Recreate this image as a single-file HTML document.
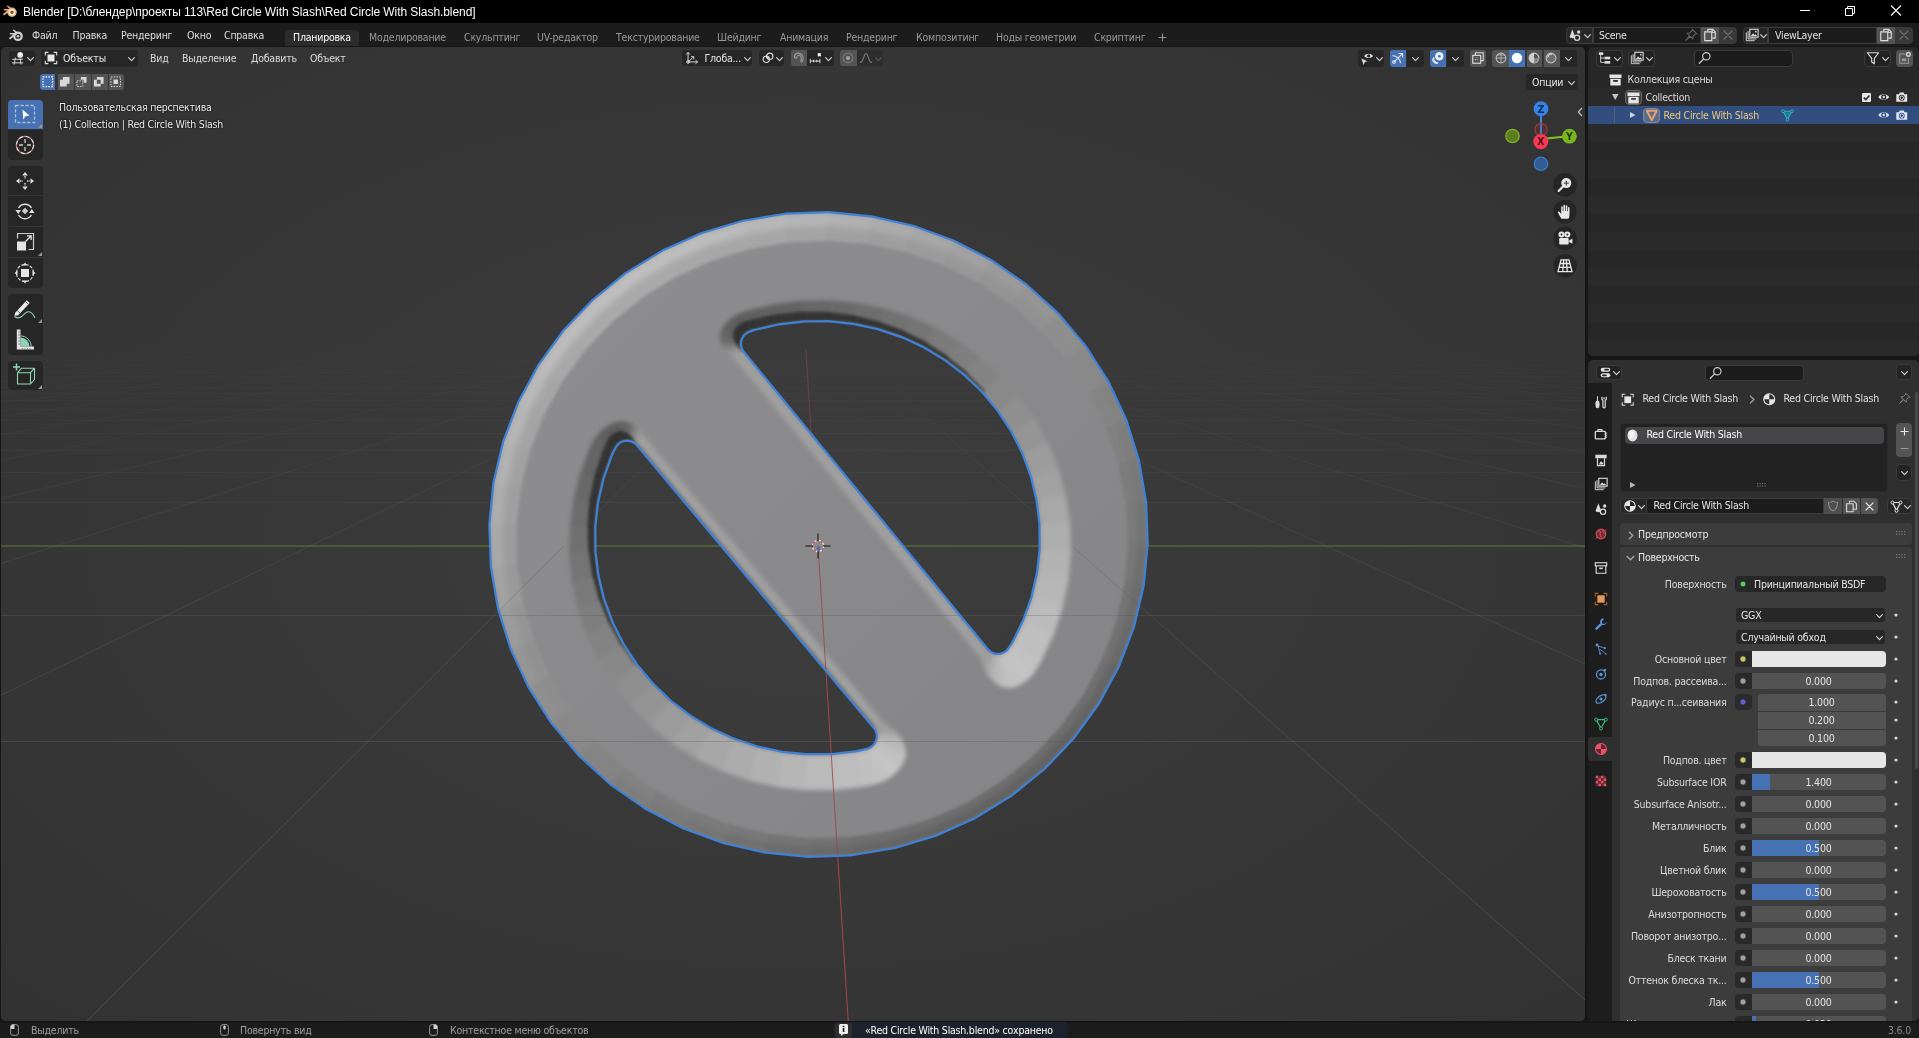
<!DOCTYPE html>
<html lang="ru"><head><meta charset="utf-8"><title>Blender</title>
<style>
*{box-sizing:border-box}
html,body{margin:0;padding:0}
body{width:1919px;height:1038px;position:relative;overflow:hidden;background:#161616;color:#e6e6e6;
 font-family:"DejaVu Sans Condensed","DejaVu Sans","Liberation Sans",sans-serif;font-stretch:condensed;font-size:10.5px;letter-spacing:-0.22px;line-height:13px;-webkit-font-smoothing:antialiased}
.abs{position:absolute}
.t{position:absolute;white-space:nowrap;line-height:13px;height:13px}
svg{position:absolute;overflow:visible}
#title{position:absolute;left:0;top:0;width:1919px;height:23px;background:#000}
#title .tt{position:absolute;left:23px;top:5px;font-family:"Liberation Sans",sans-serif;font-stretch:normal;font-size:12px;letter-spacing:-0.07px;color:#fff;line-height:15px;white-space:nowrap}
#topbar{position:absolute;left:0;top:23px;width:1919px;height:22.5px;background:#1d1d1d}
#vp{position:absolute;left:1px;top:47px;width:1584px;height:974px;border-radius:5px;overflow:hidden;background:#3a3a3a}
#outl{position:absolute;left:1588px;top:47px;width:331px;height:309px;border-radius:5px;overflow:hidden;background:#282828}
#props{position:absolute;left:1588px;top:360px;width:331px;height:661px;border-radius:5px;overflow:hidden;background:#303030}
#status{position:absolute;left:0;top:1022px;width:1919px;height:16px;background:linear-gradient(#161616 0,#161616 1px,#1d1d1d 1px);color:#a8a8a8}

#app{position:absolute;left:0;top:0;width:1919px;height:1038px;overflow:hidden;will-change:transform;opacity:0.9999}

</style></head>
<body>
<div id="app">
<div id="title"><svg style="left:3px;top:5px" width="14.5" height="12.6875" viewBox="0 0 16 14"><g fill="none" stroke="#e8a880" stroke-linecap="round"><path d="M1.2 10.3 L7.2 5.6" stroke-width="2"/><path d="M1.6 5.2 H8.2" stroke-width="1.7"/><path d="M5.2 1.4 L9.2 4.6" stroke-width="1.7"/></g><circle cx="9.9" cy="8" r="5.2" fill="#e9b98a"/><circle cx="9.9" cy="8" r="3.4" fill="#fff2d8"/><circle cx="9.9" cy="8" r="1.9" fill="#8a5a1c"/></svg><div class="tt">Blender [D:\блендер\проекты 113\Red Circle With Slash\Red Circle With Slash.blend]</div><svg style="left:1797px;top:3px" width="110" height="16" viewBox="0 0 110 16"><path d="M3 7.5 H13" stroke="#fff" stroke-width="1"/><path d="M48.5 5.5 h7 v7 h-7 z M50.5 5.5 v-2 h7 v7 h-2" fill="none" stroke="#fff" stroke-width="1"/><path d="M94 2.5 L104 12.5 M104 2.5 L94 12.5" stroke="#fff" stroke-width="1.1"/></svg></div>
<div id="topbar"><svg style="left:8.5px;top:6px" width="14.5" height="12.6875" viewBox="0 0 16 14"><g fill="none" stroke="#d2d2d2" stroke-linecap="round"><path d="M1.2 10.3 L7.2 5.6" stroke-width="2"/><path d="M1.6 5.2 H8.2" stroke-width="1.7"/><path d="M5.2 1.4 L9.2 4.6" stroke-width="1.7"/></g><circle cx="9.9" cy="8" r="4.1" fill="none" stroke="#d2d2d2" stroke-width="2.5"/><circle cx="9.9" cy="8" r="1.5" fill="#d2d2d2"/></svg><div class="t" style="left:32px;top:6px;color:#dedede;">Файл</div><div class="t" style="left:72.5px;top:6px;color:#dedede;">Правка</div><div class="t" style="left:121px;top:6px;color:#dedede;">Рендеринг</div><div class="t" style="left:187px;top:6px;color:#dedede;">Окно</div><div class="t" style="left:224px;top:6px;color:#dedede;">Справка</div><div class="abs" style="left:285px;top:7px;width:73.5px;height:15.5px;background:#2c2c2c;border-radius:4px 4px 0 0"></div><div class="t" style="left:293px;top:8px;color:#ffffff;">Планировка</div><div class="t" style="left:369px;top:8px;color:#999999;">Моделирование</div><div class="t" style="left:464px;top:8px;color:#999999;">Скульптинг</div><div class="t" style="left:537px;top:8px;color:#999999;">UV-редактор</div><div class="t" style="left:616px;top:8px;color:#999999;">Текстурирование</div><div class="t" style="left:717px;top:8px;color:#999999;">Шейдинг</div><div class="t" style="left:780px;top:8px;color:#999999;">Анимация</div><div class="t" style="left:846px;top:8px;color:#999999;">Рендеринг</div><div class="t" style="left:916px;top:8px;color:#999999;">Композитинг</div><div class="t" style="left:996px;top:8px;color:#999999;">Ноды геометрии</div><div class="t" style="left:1094px;top:8px;color:#999999;">Скриптинг</div><svg style="left:1158px;top:10px" width="9" height="9" viewBox="0 0 9 9"><path d="M4.5 0.5 V8.5 M0.5 4.5 H8.5" stroke="#8f8f8f" stroke-width="1.1"/></svg><div class="abs" style="left:1565.5px;top:3.5px;width:27.5px;height:17px;background:#282828;border-radius:4px 0 0 4px;border:1px solid #3d3d3d;"></div><div class="abs" style="left:1592.5px;top:3.5px;width:108px;height:17px;background:#1d1d1d;border-radius:0;border:1px solid #3d3d3d;"></div><div class="abs" style="left:1700.5px;top:3.5px;width:18px;height:17px;background:#545454;border-radius:0;"></div><div class="abs" style="left:1718.5px;top:3.5px;width:18px;height:17px;background:#3a3a3a;border-radius:0 4px 4px 0;"></div><div class="t" style="left:1599px;top:6px;color:#e0e0e0;">Scene</div><div class="abs" style="left:1742.5px;top:3.5px;width:25.5px;height:17px;background:#282828;border-radius:4px 0 0 4px;border:1px solid #3d3d3d;"></div><div class="abs" style="left:1767.5px;top:3.5px;width:109px;height:17px;background:#1d1d1d;border-radius:0;border:1px solid #3d3d3d;"></div><div class="abs" style="left:1876.5px;top:3.5px;width:18px;height:17px;background:#545454;border-radius:0;"></div><div class="abs" style="left:1894.5px;top:3.5px;width:18px;height:17px;background:#3a3a3a;border-radius:0 4px 4px 0;"></div><div class="t" style="left:1775px;top:6px;color:#e0e0e0;">ViewLayer</div><svg style="left:1568px;top:5px" width="14" height="14" viewBox="0 0 16 16" ><path d="M5 1.5 L8.2 10 a3.2 1.6 0 0 1 -6.4 0 Z" fill="#d8d8d8"/><circle cx="10.3" cy="11.2" r="3" fill="none" stroke="#d8d8d8" stroke-width="1.4"/><circle cx="12.2" cy="4.6" r="1.9" fill="#d8d8d8"/></svg><svg style="left:1584px;top:10.5px" width="7" height="4.6" viewBox="0 0 7 4.6"><path d="M0.6 0.6 L3.5 3.6 L6.4 0.6" fill="none" stroke="#d4d4d4" stroke-width="1.15" stroke-linecap="round" stroke-linejoin="round"/></svg><svg style="left:1684px;top:5px" width="14" height="14" viewBox="0 0 16 16" ><path d="M9.5 1.5 L14.5 6.5 L12.8 7 L10.3 9.5 L10 12.5 L7 9.6 L2 14 L6.4 9 L3.5 6 L6.5 5.7 L9 3.2 Z" fill="none" stroke="#666" stroke-width="1.2" stroke-linejoin="round"/></svg><svg style="left:1702.5px;top:5px" width="14" height="14" viewBox="0 0 16 16" ><path d="M5.5 3.5 V1.5 H11 L14 4.5 V11.5 H10.5" fill="none" stroke="#e0e0e0" stroke-width="1.3"/><path d="M2 4.5 H10 V14.5 H2 Z" fill="none" stroke="#e0e0e0" stroke-width="1.3"/><path d="M10.5 1.5 V5 H14" fill="none" stroke="#e0e0e0" stroke-width="1.1"/></svg><svg style="left:1722.5px;top:7px" width="10" height="10" viewBox="0 0 10 10" ><path d="M1 1 L9 9 M9 1 L1 9" stroke="#6a6a6a" stroke-width="1.3" stroke-linecap="round"/></svg><svg style="left:1878.5px;top:5px" width="14" height="14" viewBox="0 0 16 16" ><path d="M5.5 3.5 V1.5 H11 L14 4.5 V11.5 H10.5" fill="none" stroke="#e0e0e0" stroke-width="1.3"/><path d="M2 4.5 H10 V14.5 H2 Z" fill="none" stroke="#e0e0e0" stroke-width="1.3"/><path d="M10.5 1.5 V5 H14" fill="none" stroke="#e0e0e0" stroke-width="1.1"/></svg><svg style="left:1898.5px;top:7px" width="10" height="10" viewBox="0 0 10 10" ><path d="M1 1 L9 9 M9 1 L1 9" stroke="#6a6a6a" stroke-width="1.3" stroke-linecap="round"/></svg><svg style="left:1745px;top:5px" width="14" height="14" viewBox="0 0 16 16" ><path d="M1.5 5 V14.5 H11" fill="none" stroke="#d8d8d8" stroke-width="1.1"/><path d="M3.5 3.5 V12.5 H13" fill="none" stroke="#d8d8d8" stroke-width="1.1"/><rect x="5.5" y="1.5" width="9.5" height="9" fill="none" stroke="#d8d8d8" stroke-width="1.3"/><path d="M6.5 9.5 L9.2 6 L11 8 L12 7 L14 9.5 Z" fill="#d8d8d8"/><circle cx="12.4" cy="4.2" r="1" fill="#d8d8d8"/></svg><svg style="left:1759.5px;top:10.5px" width="7" height="4.6" viewBox="0 0 7 4.6"><path d="M0.6 0.6 L3.5 3.6 L6.4 0.6" fill="none" stroke="#d4d4d4" stroke-width="1.15" stroke-linecap="round" stroke-linejoin="round"/></svg></div>
<div id="vp"><svg id="scene" width="1584" height="974" viewBox="0 0 1584 974" style="left:0;top:0"><defs><radialGradient id="bgv" cx="50%" cy="50%" r="70.7%"><stop offset="0" stop-color="#3e3e3e"/><stop offset="1" stop-color="#333333"/></radialGradient><linearGradient id="gfade" gradientUnits="userSpaceOnUse" x1="0" y1="291" x2="0" y2="974"><stop offset="0.000" stop-color="#fff" stop-opacity="0.0008"/><stop offset="0.384" stop-color="#fff" stop-opacity="0.0720"/><stop offset="1.000" stop-color="#fff" stop-opacity="0.1221"/></linearGradient><mask id="mobj" maskUnits="userSpaceOnUse" x="0" y="0" width="1584" height="974"><path d="M1145.6 497.1 L1141.5 539 L1131.8 579.9 L1116.8 619.3 L1096.7 656.4 L1071.8 690.7 L1042.5 721.4 L1009.4 748.2 L973 770.4 L933.9 787.9 L892.9 800.2 L850.6 807.2 L807.7 808.7 L764.9 804.6 L723.1 795.2 L682.9 780.5 L644.9 760.8 L610 736.4 L578.6 707.8 L551.2 675.4 L528.5 639.7 L510.7 601.5 L498.1 561.3 L491 519.9 L489.4 477.9 L493.5 436 L503.2 395.1 L518.2 355.7 L538.3 318.6 L563.2 284.3 L592.5 253.6 L625.6 226.8 L662 204.6 L701.1 187.1 L742.1 174.8 L784.4 167.8 L827.3 166.3 L870.1 170.4 L911.9 179.8 L952.1 194.5 L990.1 214.2 L1025 238.6 L1056.4 267.2 L1083.8 299.6 L1106.5 335.3 L1124.3 373.5 L1136.9 413.7 L1144 455.1Z" fill="#fff"/><g fill="#000"><path d="M1039.7 500.9 L1039.7 502.5 L1037.2 525.2 L1036.9 526.8 L1031.8 549.1 L1031.4 550.7 L1023.7 572.3 L1023.1 573.8 L1013.1 594.4 L1012.3 595.8 L1008.7 601.5 L1007.7 602.8 L1006.7 603.9 L1005.5 605 L1004.3 605.8 L1002.9 606.6 L1001.5 607.2 L1000 607.6 L998.5 607.9 L996.9 608 L995.4 607.9 L993.8 607.7 L992.3 607.2 L990.9 606.7 L989.5 605.9 L988.2 605 L987.1 604 L986 602.9 L742.1 305.7 L741.1 304.4 L740.4 303.1 L739.7 301.6 L739.3 300.1 L739 298.5 L738.9 297 L739 295.4 L739.2 293.8 L739.7 292.3 L740.3 290.8 L741 289.4 L741.9 288.1 L743 286.9 L744.2 285.9 L745.4 285 L746.8 284.2 L748.3 283.6 L752.7 282.1 L754.2 281.7 L777 276.4 L778.5 276.2 L801.9 273.5 L803.4 273.4 L826.9 273.3 L828.4 273.3 L851.8 275.7 L853.3 276 L876.2 280.9 L877.7 281.3 L899.9 288.8 L901.4 289.3 L922.6 299.1 L923.9 299.8 L943.9 311.9 L945.2 312.8 L963.7 326.9 L964.8 327.9 L981.6 344 L982.6 345.1 L997.4 362.9 L998.3 364.2 L1011 383.5 L1011.7 384.8 L1022.1 405.4 L1022.7 406.8 L1030.6 428.4 L1031.1 429.9 L1036.4 452.2 L1036.7 453.7 L1039.5 476.4 L1039.6 478Z"/><path d="M873.5 680.2 L874.5 681.5 L875.3 682.9 L875.9 684.3 L876.4 685.9 L876.7 687.4 L876.8 689 L876.7 690.6 L876.5 692.2 L876.1 693.7 L875.5 695.2 L874.7 696.6 L873.8 697.9 L872.8 699.1 L871.6 700.1 L870.3 701.1 L868.9 701.8 L867.4 702.4 L865.9 702.9 L856 705.2 L854.5 705.4 L831.1 708.1 L829.6 708.2 L806.1 708.3 L804.6 708.3 L781.2 705.9 L779.7 705.6 L756.8 700.7 L755.3 700.3 L733.1 692.8 L731.6 692.3 L710.4 682.5 L709.1 681.8 L689.1 669.7 L687.8 668.8 L669.3 654.7 L668.2 653.7 L651.4 637.6 L650.4 636.5 L635.6 618.7 L634.7 617.4 L622 598.1 L621.3 596.8 L610.9 576.2 L610.3 574.8 L602.4 553.2 L601.9 551.7 L596.6 529.4 L596.3 527.9 L593.5 505.2 L593.4 503.6 L593.3 480.7 L593.3 479.1 L595.8 456.4 L596.1 454.8 L601.2 432.5 L601.6 430.9 L609.3 409.3 L609.9 407.8 L613.4 400.5 L614.2 399.2 L615.1 397.9 L616.1 396.8 L617.3 395.7 L618.5 394.8 L619.9 394.1 L621.3 393.5 L622.8 393 L624.3 392.8 L625.9 392.7 L627.4 392.7 L628.9 393 L630.4 393.4 L631.9 394 L633.2 394.7 L634.5 395.5 L635.7 396.6 L636.7 397.7Z"/></g></mask><mask id="mblue" maskUnits="userSpaceOnUse" x="0" y="0" width="1584" height="974"><path d="M1145.6 497.1 L1141.5 539 L1131.8 579.9 L1116.8 619.3 L1096.7 656.4 L1071.8 690.7 L1042.5 721.4 L1009.4 748.2 L973 770.4 L933.9 787.9 L892.9 800.2 L850.6 807.2 L807.7 808.7 L764.9 804.6 L723.1 795.2 L682.9 780.5 L644.9 760.8 L610 736.4 L578.6 707.8 L551.2 675.4 L528.5 639.7 L510.7 601.5 L498.1 561.3 L491 519.9 L489.4 477.9 L493.5 436 L503.2 395.1 L518.2 355.7 L538.3 318.6 L563.2 284.3 L592.5 253.6 L625.6 226.8 L662 204.6 L701.1 187.1 L742.1 174.8 L784.4 167.8 L827.3 166.3 L870.1 170.4 L911.9 179.8 L952.1 194.5 L990.1 214.2 L1025 238.6 L1056.4 267.2 L1083.8 299.6 L1106.5 335.3 L1124.3 373.5 L1136.9 413.7 L1144 455.1Z" fill="#fff" stroke="#fff" stroke-width="4.4" stroke-linejoin="round"/><g fill="#000" stroke="#fff" stroke-width="4.4" stroke-linejoin="round"><path d="M1039.7 500.9 L1039.7 502.5 L1037.2 525.2 L1036.9 526.8 L1031.8 549.1 L1031.4 550.7 L1023.7 572.3 L1023.1 573.8 L1013.1 594.4 L1012.3 595.8 L1008.7 601.5 L1007.7 602.8 L1006.7 603.9 L1005.5 605 L1004.3 605.8 L1002.9 606.6 L1001.5 607.2 L1000 607.6 L998.5 607.9 L996.9 608 L995.4 607.9 L993.8 607.7 L992.3 607.2 L990.9 606.7 L989.5 605.9 L988.2 605 L987.1 604 L986 602.9 L742.1 305.7 L741.1 304.4 L740.4 303.1 L739.7 301.6 L739.3 300.1 L739 298.5 L738.9 297 L739 295.4 L739.2 293.8 L739.7 292.3 L740.3 290.8 L741 289.4 L741.9 288.1 L743 286.9 L744.2 285.9 L745.4 285 L746.8 284.2 L748.3 283.6 L752.7 282.1 L754.2 281.7 L777 276.4 L778.5 276.2 L801.9 273.5 L803.4 273.4 L826.9 273.3 L828.4 273.3 L851.8 275.7 L853.3 276 L876.2 280.9 L877.7 281.3 L899.9 288.8 L901.4 289.3 L922.6 299.1 L923.9 299.8 L943.9 311.9 L945.2 312.8 L963.7 326.9 L964.8 327.9 L981.6 344 L982.6 345.1 L997.4 362.9 L998.3 364.2 L1011 383.5 L1011.7 384.8 L1022.1 405.4 L1022.7 406.8 L1030.6 428.4 L1031.1 429.9 L1036.4 452.2 L1036.7 453.7 L1039.5 476.4 L1039.6 478Z"/><path d="M873.5 680.2 L874.5 681.5 L875.3 682.9 L875.9 684.3 L876.4 685.9 L876.7 687.4 L876.8 689 L876.7 690.6 L876.5 692.2 L876.1 693.7 L875.5 695.2 L874.7 696.6 L873.8 697.9 L872.8 699.1 L871.6 700.1 L870.3 701.1 L868.9 701.8 L867.4 702.4 L865.9 702.9 L856 705.2 L854.5 705.4 L831.1 708.1 L829.6 708.2 L806.1 708.3 L804.6 708.3 L781.2 705.9 L779.7 705.6 L756.8 700.7 L755.3 700.3 L733.1 692.8 L731.6 692.3 L710.4 682.5 L709.1 681.8 L689.1 669.7 L687.8 668.8 L669.3 654.7 L668.2 653.7 L651.4 637.6 L650.4 636.5 L635.6 618.7 L634.7 617.4 L622 598.1 L621.3 596.8 L610.9 576.2 L610.3 574.8 L602.4 553.2 L601.9 551.7 L596.6 529.4 L596.3 527.9 L593.5 505.2 L593.4 503.6 L593.3 480.7 L593.3 479.1 L595.8 456.4 L596.1 454.8 L601.2 432.5 L601.6 430.9 L609.3 409.3 L609.9 407.8 L613.4 400.5 L614.2 399.2 L615.1 397.9 L616.1 396.8 L617.3 395.7 L618.5 394.8 L619.9 394.1 L621.3 393.5 L622.8 393 L624.3 392.8 L625.9 392.7 L627.4 392.7 L628.9 393 L630.4 393.4 L631.9 394 L633.2 394.7 L634.5 395.5 L635.7 396.6 L636.7 397.7Z"/></g></mask><linearGradient id="gOuter" x1="0.2" y1="0.05" x2="0.85" y2="0.95"><stop offset="0" stop-color="#adadad"/><stop offset="0.45" stop-color="#9a9a9a"/><stop offset="0.6" stop-color="#858585"/><stop offset="1" stop-color="#6e6e6e"/></linearGradient><linearGradient id="gFace" x1="0" y1="0" x2="1" y2="1"><stop offset="0" stop-color="#909092"/><stop offset="1" stop-color="#858587"/></linearGradient><linearGradient id="gInA" gradientUnits="userSpaceOnUse" x1="699" y1="253" x2="1049" y2="653"><stop offset="0" stop-color="#3c3c3c"/><stop offset="0.42" stop-color="#5a5a5a"/><stop offset="0.6" stop-color="#a0a0a0"/><stop offset="1" stop-color="#b4b4b4"/></linearGradient><linearGradient id="gInB" gradientUnits="userSpaceOnUse" x1="589" y1="383" x2="899" y2="733"><stop offset="0" stop-color="#383838"/><stop offset="0.45" stop-color="#585858"/><stop offset="0.62" stop-color="#a8a8a8"/><stop offset="1" stop-color="#bcbcbc"/></linearGradient><filter id="b3" x="-10%" y="-10%" width="120%" height="120%"><feGaussianBlur stdDeviation="3"/></filter><filter id="b5" x="-10%" y="-10%" width="120%" height="120%"><feGaussianBlur stdDeviation="5"/></filter><filter id="b25" x="-10%" y="-10%" width="120%" height="120%"><feGaussianBlur stdDeviation="2.2"/></filter><filter id="b2" x="-10%" y="-10%" width="120%" height="120%"><feGaussianBlur stdDeviation="1.6"/></filter></defs><rect width="1584" height="974" fill="url(#bgv)"/><path d="M-476.8 291 L-29590.4 974 M-444.8 291 L-28829.4 974 M-412.7 291 L-28068.5 974 M-380.7 291 L-27307.6 974 M-348.7 291 L-26546.6 974 M-316.7 291 L-25785.7 974 M-284.7 291 L-25024.8 974 M-252.7 291 L-24263.8 974 M-220.6 291 L-23502.9 974 M-188.6 291 L-22742 974 M-156.6 291 L-21981 974 M-124.6 291 L-21220.1 974 M-92.6 291 L-20459.2 974 M-60.6 291 L-19698.2 974 M-28.5 291 L-18937.3 974 M3.5 291 L-18176.4 974 M35.5 291 L-17415.4 974 M67.5 291 L-16654.5 974 M99.5 291 L-15893.6 974 M131.5 291 L-15132.7 974 M163.6 291 L-14371.7 974 M195.6 291 L-13610.8 974 M227.6 291 L-12849.9 974 M259.6 291 L-12088.9 974 M291.6 291 L-11328 974 M323.6 291 L-10567.1 974 M355.7 291 L-9806.1 974 M387.7 291 L-9045.2 974 M419.7 291 L-8284.3 974 M451.7 291 L-7523.3 974 M483.7 291 L-6762.4 974 M515.7 291 L-6001.5 974 M547.8 291 L-5240.5 974 M579.8 291 L-4479.6 974 M611.8 291 L-3718.7 974 M643.8 291 L-2957.7 974 M675.8 291 L-2196.8 974 M707.8 291 L-1435.9 974 M739.9 291 L-674.9 974 M771.9 291 L86 974 M835.9 291 L1607.9 974 M867.9 291 L2368.8 974 M899.9 291 L3129.7 974 M932 291 L3890.7 974 M964 291 L4651.6 974 M996 291 L5412.5 974 M1028 291 L6173.5 974 M1060 291 L6934.4 974 M1092 291 L7695.3 974 M1124.1 291 L8456.3 974 M1156.1 291 L9217.2 974 M1188.1 291 L9978.1 974 M1220.1 291 L10739.1 974 M1252.1 291 L11500 974 M1284.1 291 L12260.9 974 M1316.2 291 L13021.9 974 M1348.2 291 L13782.8 974 M1380.2 291 L14543.7 974 M1412.2 291 L15304.7 974 M1444.2 291 L16065.6 974 M1476.2 291 L16826.5 974 M1508.3 291 L17587.5 974 M1540.3 291 L18348.4 974 M1572.3 291 L19109.3 974 M1604.3 291 L19870.3 974 M1636.3 291 L20631.2 974 M1668.3 291 L21392.1 974 M1700.4 291 L22153.1 974 M1732.4 291 L22914 974 M1764.4 291 L23674.9 974 M1796.4 291 L24435.9 974 M1828.4 291 L25196.8 974 M1860.4 291 L25957.7 974 M1892.5 291 L26718.7 974 M1924.5 291 L27479.6 974 M1956.5 291 L28240.5 974 M1988.5 291 L29001.4 974 M2020.5 291 L29762.4 974 M2052.5 291 L30523.3 974 M2084.6 291 L31284.2 974" stroke="url(#gfade)" stroke-width="1" fill="none"/><path d="M0 694.5 H1584" stroke="#fff" stroke-opacity="0.089" stroke-width="1"/><path d="M0 568.5 H1584" stroke="#fff" stroke-opacity="0.074" stroke-width="1"/><path d="M0 455.5 H1584" stroke="#fff" stroke-opacity="0.045" stroke-width="1"/><path d="M0 425.5 H1584" stroke="#fff" stroke-opacity="0.037" stroke-width="1"/><path d="M0 403.5 H1584" stroke="#fff" stroke-opacity="0.031" stroke-width="1"/><path d="M0 386.5 H1584" stroke="#fff" stroke-opacity="0.027" stroke-width="1"/><path d="M0 373.5 H1584" stroke="#fff" stroke-opacity="0.023" stroke-width="1"/><path d="M0 362.5 H1584" stroke="#fff" stroke-opacity="0.020" stroke-width="1"/><path d="M0 353.5 H1584" stroke="#fff" stroke-opacity="0.018" stroke-width="1"/><path d="M0 346.5 H1584" stroke="#fff" stroke-opacity="0.016" stroke-width="1"/><path d="M0 340.5 H1584" stroke="#fff" stroke-opacity="0.014" stroke-width="1"/><path d="M0 334.5 H1584" stroke="#fff" stroke-opacity="0.013" stroke-width="1"/><path d="M0 329.5 H1584" stroke="#fff" stroke-opacity="0.011" stroke-width="1"/><path d="M0 325.5 H1584" stroke="#fff" stroke-opacity="0.010" stroke-width="1"/><path d="M0 322.5 H1584" stroke="#fff" stroke-opacity="0.009" stroke-width="1"/><path d="M0 318.5 H1584" stroke="#fff" stroke-opacity="0.008" stroke-width="1"/><path d="M0 315.5 H1584" stroke="#fff" stroke-opacity="0.007" stroke-width="1"/><path d="M0 313.5 H1584" stroke="#fff" stroke-opacity="0.007" stroke-width="1"/><path d="M0 310.5 H1584" stroke="#fff" stroke-opacity="0.006" stroke-width="1"/><path d="M0 308.5 H1584" stroke="#fff" stroke-opacity="0.005" stroke-width="1"/><path d="M0 306.5 H1584" stroke="#fff" stroke-opacity="0.005" stroke-width="1"/><path d="M0 304.5 H1584" stroke="#fff" stroke-opacity="0.004" stroke-width="1"/><path d="M0 499 H1584" stroke="#6a8c32" stroke-width="1" stroke-opacity="0.85"/><path d="M817 499 L847.2 974" stroke="#b5484f" stroke-width="1" stroke-opacity="0.9"/><path d="M817 499 L805 303" stroke="#b5484f" stroke-width="1" stroke-opacity="0.45"/><g mask="url(#mblue)"><rect x="480" y="150" width="680" height="680" fill="#3f82d8"/></g><g mask="url(#mobj)"><rect x="480" y="150" width="680" height="680" fill="url(#gFace)"/><g stroke-width="0.8" filter="url(#b2)"><path d="M1145.6 497.1 L1141.5 539 L1123.9 536.1 L1127.2 496.6Z" fill="#787878" stroke="#787878"/><path d="M1141.5 539 L1131.8 579.9 L1115.4 574.9 L1123.9 536.1Z" fill="#757575" stroke="#757575"/><path d="M1131.8 579.9 L1116.8 619.3 L1101.6 612.3 L1115.4 574.9Z" fill="#737373" stroke="#737373"/><path d="M1116.8 619.3 L1096.7 656.4 L1082.8 647.7 L1101.6 612.3Z" fill="#717171" stroke="#717171"/><path d="M1096.7 656.4 L1071.8 690.7 L1059.4 680.3 L1082.8 647.7Z" fill="#6f6f6f" stroke="#6f6f6f"/><path d="M1071.8 690.7 L1042.5 721.4 L1031.7 709.7 L1059.4 680.3Z" fill="#6e6e6e" stroke="#6e6e6e"/><path d="M1042.5 721.4 L1009.4 748.2 L1000.2 735.1 L1031.7 709.7Z" fill="#6e6e6e" stroke="#6e6e6e"/><path d="M1009.4 748.2 L973 770.4 L965.6 756.3 L1000.2 735.1Z" fill="#6e6e6e" stroke="#6e6e6e"/><path d="M973 770.4 L933.9 787.9 L928.3 772.8 L965.6 756.3Z" fill="#6f6f6f" stroke="#6f6f6f"/><path d="M933.9 787.9 L892.9 800.2 L889.2 784.3 L928.3 772.8Z" fill="#707070" stroke="#707070"/><path d="M892.9 800.2 L850.6 807.2 L848.9 790.5 L889.2 784.3Z" fill="#717171" stroke="#717171"/><path d="M850.6 807.2 L807.7 808.7 L808.2 791.5 L848.9 790.5Z" fill="#737373" stroke="#737373"/><path d="M807.7 808.7 L764.9 804.6 L767.7 787.2 L808.2 791.5Z" fill="#767676" stroke="#767676"/><path d="M764.9 804.6 L723.1 795.2 L728.2 777.7 L767.7 787.2Z" fill="#797979" stroke="#797979"/><path d="M723.1 795.2 L682.9 780.5 L690.5 763.2 L728.2 777.7Z" fill="#7c7c7c" stroke="#7c7c7c"/><path d="M682.9 780.5 L644.9 760.8 L655.1 744.1 L690.5 763.2Z" fill="#7f7f7f" stroke="#7f7f7f"/><path d="M644.9 760.8 L610 736.4 L622.7 720.5 L655.1 744.1Z" fill="#838383" stroke="#838383"/><path d="M610 736.4 L578.6 707.8 L593.8 693.1 L622.7 720.5Z" fill="#868686" stroke="#868686"/><path d="M578.6 707.8 L551.2 675.4 L568.9 662.4 L593.8 693.1Z" fill="#8a8a8a" stroke="#8a8a8a"/><path d="M551.2 675.4 L528.5 639.7 L548.4 628.8 L568.9 662.4Z" fill="#8e8e8e" stroke="#8e8e8e"/><path d="M528.5 639.7 L510.7 601.5 L532.6 593 L548.4 628.8Z" fill="#929292" stroke="#929292"/><path d="M510.7 601.5 L498.1 561.3 L521.7 555.6 L532.6 593Z" fill="#969696" stroke="#969696"/><path d="M498.1 561.3 L491 519.9 L515.9 517.3 L521.7 555.6Z" fill="#9a9a9a" stroke="#9a9a9a"/><path d="M491 519.9 L489.4 477.9 L515.1 478.6 L515.9 517.3Z" fill="#9d9d9d" stroke="#9d9d9d"/><path d="M489.4 477.9 L493.5 436 L519.5 440.3 L515.1 478.6Z" fill="#a0a0a0" stroke="#a0a0a0"/><path d="M493.5 436 L503.2 395.1 L528.9 403 L519.5 440.3Z" fill="#a3a3a3" stroke="#a3a3a3"/><path d="M503.2 395.1 L518.2 355.7 L543 367.1 L528.9 403Z" fill="#a5a5a5" stroke="#a5a5a5"/><path d="M518.2 355.7 L538.3 318.6 L561.7 333.4 L543 367.1Z" fill="#a7a7a7" stroke="#a7a7a7"/><path d="M538.3 318.6 L563.2 284.3 L584.7 302.2 L561.7 333.4Z" fill="#a9a9a9" stroke="#a9a9a9"/><path d="M563.2 284.3 L592.5 253.6 L611.5 274.3 L584.7 302.2Z" fill="#aaaaaa" stroke="#aaaaaa"/><path d="M592.5 253.6 L625.6 226.8 L641.8 249.9 L611.5 274.3Z" fill="#aaaaaa" stroke="#aaaaaa"/><path d="M625.6 226.8 L662 204.6 L675.1 229.4 L641.8 249.9Z" fill="#aaaaaa" stroke="#aaaaaa"/><path d="M662 204.6 L701.1 187.1 L710.8 213.3 L675.1 229.4Z" fill="#a9a9a9" stroke="#a9a9a9"/><path d="M701.1 187.1 L742.1 174.8 L748.3 201.8 L710.8 213.3Z" fill="#a8a8a8" stroke="#a8a8a8"/><path d="M742.1 174.8 L784.4 167.8 L787.1 195.1 L748.3 201.8Z" fill="#a7a7a7" stroke="#a7a7a7"/><path d="M784.4 167.8 L827.3 166.3 L826.6 193.3 L787.1 195.1Z" fill="#a5a5a5" stroke="#a5a5a5"/><path d="M827.3 166.3 L870.1 170.4 L865.9 196.5 L826.6 193.3Z" fill="#a2a2a2" stroke="#a2a2a2"/><path d="M870.1 170.4 L911.9 179.8 L904.6 204.6 L865.9 196.5Z" fill="#9f9f9f" stroke="#9f9f9f"/><path d="M911.9 179.8 L952.1 194.5 L942 217.6 L904.6 204.6Z" fill="#9c9c9c" stroke="#9c9c9c"/><path d="M952.1 194.5 L990.1 214.2 L977.4 235.2 L942 217.6Z" fill="#999999" stroke="#999999"/><path d="M990.1 214.2 L1025 238.6 L1010.2 257.1 L977.4 235.2Z" fill="#959595" stroke="#959595"/><path d="M1025 238.6 L1056.4 267.2 L1039.9 283.2 L1010.2 257.1Z" fill="#929292" stroke="#929292"/><path d="M1056.4 267.2 L1083.8 299.6 L1065.9 312.8 L1039.9 283.2Z" fill="#8e8e8e" stroke="#8e8e8e"/><path d="M1083.8 299.6 L1106.5 335.3 L1087.8 345.6 L1065.9 312.8Z" fill="#8a8a8a" stroke="#8a8a8a"/><path d="M1106.5 335.3 L1124.3 373.5 L1105.2 380.9 L1087.8 345.6Z" fill="#868686" stroke="#868686"/><path d="M1124.3 373.5 L1136.9 413.7 L1117.7 418.3 L1105.2 380.9Z" fill="#828282" stroke="#828282"/><path d="M1136.9 413.7 L1144 455.1 L1125.1 457.1 L1117.7 418.3Z" fill="#7e7e7e" stroke="#7e7e7e"/><path d="M1144 455.1 L1145.6 497.1 L1127.2 496.6 L1125.1 457.1Z" fill="#7b7b7b" stroke="#7b7b7b"/></g><g stroke-width="0.8" filter="url(#b3)"><path d="M1145.6 497.1 L1141.5 539 L1133.6 537.7 L1137.3 496.9Z" fill="#6e6e6e" stroke="#6e6e6e"/><path d="M1141.5 539 L1131.8 579.9 L1124.4 577.7 L1133.6 537.7Z" fill="#6a6a6a" stroke="#6a6a6a"/><path d="M1131.8 579.9 L1116.8 619.3 L1110 616.2 L1124.4 577.7Z" fill="#676767" stroke="#676767"/><path d="M1116.8 619.3 L1096.7 656.4 L1090.4 652.5 L1110 616.2Z" fill="#646464" stroke="#646464"/><path d="M1096.7 656.4 L1071.8 690.7 L1066.2 686 L1090.4 652.5Z" fill="#626262" stroke="#626262"/><path d="M1071.8 690.7 L1042.5 721.4 L1037.6 716.1 L1066.2 686Z" fill="#616161" stroke="#616161"/><path d="M1042.5 721.4 L1009.4 748.2 L1005.3 742.3 L1037.6 716.1Z" fill="#606060" stroke="#606060"/><path d="M1009.4 748.2 L973 770.4 L969.6 764.1 L1005.3 742.3Z" fill="#606060" stroke="#606060"/><path d="M973 770.4 L933.9 787.9 L931.4 781.1 L969.6 764.1Z" fill="#616161" stroke="#616161"/><path d="M933.9 787.9 L892.9 800.2 L891.2 793 L931.4 781.1Z" fill="#636363" stroke="#636363"/><path d="M892.9 800.2 L850.6 807.2 L849.8 799.7 L891.2 793Z" fill="#656565" stroke="#656565"/><path d="M850.6 807.2 L807.7 808.7 L807.9 800.9 L849.8 799.7Z" fill="#686868" stroke="#686868"/><path d="M807.7 808.7 L764.9 804.6 L766.2 796.8 L807.9 800.9Z" fill="#6b6b6b" stroke="#6b6b6b"/><path d="M764.9 804.6 L723.1 795.2 L725.4 787.3 L766.2 796.8Z" fill="#6f6f6f" stroke="#6f6f6f"/><path d="M723.1 795.2 L682.9 780.5 L686.3 772.7 L725.4 787.3Z" fill="#747474" stroke="#747474"/><path d="M682.9 780.5 L644.9 760.8 L649.5 753.3 L686.3 772.7Z" fill="#797979" stroke="#797979"/><path d="M644.9 760.8 L610 736.4 L615.7 729.3 L649.5 753.3Z" fill="#7e7e7e" stroke="#7e7e7e"/><path d="M610 736.4 L578.6 707.8 L585.4 701.2 L615.7 729.3Z" fill="#848484" stroke="#848484"/><path d="M578.6 707.8 L551.2 675.4 L559.2 669.5 L585.4 701.2Z" fill="#898989" stroke="#898989"/><path d="M551.2 675.4 L528.5 639.7 L537.4 634.8 L559.2 669.5Z" fill="#909090" stroke="#909090"/><path d="M528.5 639.7 L510.7 601.5 L520.5 597.7 L537.4 634.8Z" fill="#979797" stroke="#979797"/><path d="M510.7 601.5 L498.1 561.3 L508.7 558.8 L520.5 597.7Z" fill="#9d9d9d" stroke="#9d9d9d"/><path d="M498.1 561.3 L491 519.9 L502.2 518.7 L508.7 558.8Z" fill="#a4a4a4" stroke="#a4a4a4"/><path d="M491 519.9 L489.4 477.9 L501 478.2 L502.2 518.7Z" fill="#aaaaaa" stroke="#aaaaaa"/><path d="M489.4 477.9 L493.5 436 L505.2 438 L501 478.2Z" fill="#afafaf" stroke="#afafaf"/><path d="M493.5 436 L503.2 395.1 L514.7 398.6 L505.2 438Z" fill="#b4b4b4" stroke="#b4b4b4"/><path d="M503.2 395.1 L518.2 355.7 L529.4 360.8 L514.7 398.6Z" fill="#b8b8b8" stroke="#b8b8b8"/><path d="M518.2 355.7 L538.3 318.6 L548.9 325.2 L529.4 360.8Z" fill="#bbbbbb" stroke="#bbbbbb"/><path d="M538.3 318.6 L563.2 284.3 L572.9 292.4 L548.9 325.2Z" fill="#bebebe" stroke="#bebebe"/><path d="M563.2 284.3 L592.5 253.6 L601.1 262.9 L572.9 292.4Z" fill="#bfbfbf" stroke="#bfbfbf"/><path d="M592.5 253.6 L625.6 226.8 L632.9 237.2 L601.1 262.9Z" fill="#c0c0c0" stroke="#c0c0c0"/><path d="M625.6 226.8 L662 204.6 L667.9 215.7 L632.9 237.2Z" fill="#c0c0c0" stroke="#c0c0c0"/><path d="M662 204.6 L701.1 187.1 L705.4 198.9 L667.9 215.7Z" fill="#bfbfbf" stroke="#bfbfbf"/><path d="M701.1 187.1 L742.1 174.8 L744.9 186.9 L705.4 198.9Z" fill="#bdbdbd" stroke="#bdbdbd"/><path d="M742.1 174.8 L784.4 167.8 L785.7 180.1 L744.9 186.9Z" fill="#bababa" stroke="#bababa"/><path d="M784.4 167.8 L827.3 166.3 L827 178.5 L785.7 180.1Z" fill="#b7b7b7" stroke="#b7b7b7"/><path d="M827.3 166.3 L870.1 170.4 L868.2 182.1 L827 178.5Z" fill="#b3b3b3" stroke="#b3b3b3"/><path d="M870.1 170.4 L911.9 179.8 L908.6 190.9 L868.2 182.1Z" fill="#aeaeae" stroke="#aeaeae"/><path d="M911.9 179.8 L952.1 194.5 L947.6 204.9 L908.6 190.9Z" fill="#a8a8a8" stroke="#a8a8a8"/><path d="M952.1 194.5 L990.1 214.2 L984.3 223.6 L947.6 204.9Z" fill="#a3a3a3" stroke="#a3a3a3"/><path d="M990.1 214.2 L1025 238.6 L1018.3 246.9 L984.3 223.6Z" fill="#9c9c9c" stroke="#9c9c9c"/><path d="M1025 238.6 L1056.4 267.2 L1049 274.4 L1018.3 246.9Z" fill="#969696" stroke="#969696"/><path d="M1056.4 267.2 L1083.8 299.6 L1075.7 305.6 L1049 274.4Z" fill="#8f8f8f" stroke="#8f8f8f"/><path d="M1083.8 299.6 L1106.5 335.3 L1098.1 339.9 L1075.7 305.6Z" fill="#898989" stroke="#898989"/><path d="M1106.5 335.3 L1124.3 373.5 L1115.7 376.9 L1098.1 339.9Z" fill="#838383" stroke="#838383"/><path d="M1124.3 373.5 L1136.9 413.7 L1128.3 415.8 L1115.7 376.9Z" fill="#7d7d7d" stroke="#7d7d7d"/><path d="M1136.9 413.7 L1144 455.1 L1135.5 456 L1128.3 415.8Z" fill="#787878" stroke="#787878"/><path d="M1144 455.1 L1145.6 497.1 L1137.3 496.9 L1135.5 456Z" fill="#737373" stroke="#737373"/></g><g stroke-width="0.8" filter="url(#b25)"><path d="M1039.7 500.9 L1039.7 502.5 L1069.7 504.9 L1069.4 501.6Z" fill="#b1b1b1" stroke="#b1b1b1"/><path d="M1039.7 502.5 L1037.2 525.2 L1067.4 529.4 L1069.7 504.9Z" fill="#b4b4b4" stroke="#b4b4b4"/><path d="M1037.2 525.2 L1036.9 526.8 L1067.2 532.8 L1067.4 529.4Z" fill="#b6b6b6" stroke="#b6b6b6"/><path d="M1036.9 526.8 L1031.8 549.1 L1062.1 557 L1067.2 532.8Z" fill="#b8b8b8" stroke="#b8b8b8"/><path d="M1031.8 549.1 L1031.4 550.7 L1061.5 560.4 L1062.1 557Z" fill="#bababa" stroke="#bababa"/><path d="M1031.4 550.7 L1023.7 572.3 L1053.6 583.8 L1061.5 560.4Z" fill="#bcbcbc" stroke="#bcbcbc"/><path d="M1023.7 572.3 L1023.1 573.8 L1052.6 587.1 L1053.6 583.8Z" fill="#bebebe" stroke="#bebebe"/><path d="M1023.1 573.8 L1013.1 594.4 L1042 609.6 L1052.6 587.1Z" fill="#c0c0c0" stroke="#c0c0c0"/><path d="M1013.1 594.4 L1012.3 595.8 L1040.6 612.8 L1042 609.6Z" fill="#c1c1c1" stroke="#c1c1c1"/><path d="M1012.3 595.8 L1008.7 601.5 L1036.2 620.2 L1040.6 612.8Z" fill="#c2c2c2" stroke="#c2c2c2"/><path d="M1008.7 601.5 L1007.7 602.8 L1034 623.9 L1036.2 620.2Z" fill="#c3c3c3" stroke="#c3c3c3"/><path d="M1007.7 602.8 L1006.7 603.9 L1030.8 628.2 L1034 623.9Z" fill="#c5c5c5" stroke="#c5c5c5"/><path d="M1006.7 603.9 L1005.5 605 L1027 632 L1030.8 628.2Z" fill="#c6c6c6" stroke="#c6c6c6"/><path d="M1005.5 605 L1004.3 605.8 L1022.7 635.3 L1027 632Z" fill="#c6c6c6" stroke="#c6c6c6"/><path d="M1004.3 605.8 L1002.9 606.6 L1018.1 638 L1022.7 635.3Z" fill="#c5c5c5" stroke="#c5c5c5"/><path d="M1002.9 606.6 L1001.5 607.2 L1013 640.1 L1018.1 638Z" fill="#c4c4c4" stroke="#c4c4c4"/><path d="M1001.5 607.2 L1000 607.6 L1007.6 640.8 L1013 640.1Z" fill="#c2c2c2" stroke="#c2c2c2"/><path d="M1000 607.6 L998.5 607.9 L1002.2 639.9 L1007.6 640.8Z" fill="#c0c0c0" stroke="#c0c0c0"/><path d="M998.5 607.9 L996.9 608 L997 637.6 L1002.2 639.9Z" fill="#bcbcbc" stroke="#bcbcbc"/><path d="M996.9 608 L995.4 607.9 L992.5 634.2 L997 637.6Z" fill="#b9b9b9" stroke="#b9b9b9"/><path d="M995.4 607.9 L993.8 607.7 L988.8 630.2 L992.5 634.2Z" fill="#b4b4b4" stroke="#b4b4b4"/><path d="M993.8 607.7 L992.3 607.2 L986 625.9 L988.8 630.2Z" fill="#acacac" stroke="#acacac"/><path d="M992.3 607.2 L990.9 606.7 L983.8 621.7 L986 625.9Z" fill="#a6a6a6" stroke="#a6a6a6"/><path d="M990.9 606.7 L989.5 605.9 L982.3 617.8 L983.8 621.7Z" fill="#a2a2a2" stroke="#a2a2a2"/><path d="M989.5 605.9 L988.2 605 L981 614.3 L982.3 617.8Z" fill="#a0a0a0" stroke="#a0a0a0"/><path d="M988.2 605 L987.1 604 L979.8 611.5 L981 614.3Z" fill="#9f9f9f" stroke="#9f9f9f"/><path d="M987.1 604 L986 602.9 L978.5 609.4 L979.8 611.5Z" fill="#a0a0a0" stroke="#a0a0a0"/><path d="M986 602.9 L742.1 305.7 L734.1 311.9 L978.5 609.4Z" fill="#a0a0a0" stroke="#a0a0a0"/><path d="M742.1 305.7 L741.1 304.4 L732.4 310.1 L734.1 311.9Z" fill="#a0a0a0" stroke="#a0a0a0"/><path d="M741.1 304.4 L740.4 303.1 L730 308.2 L732.4 310.1Z" fill="#9e9e9e" stroke="#9e9e9e"/><path d="M740.4 303.1 L739.7 301.6 L727.4 306.1 L730 308.2Z" fill="#9a9a9a" stroke="#9a9a9a"/><path d="M739.7 301.6 L739.3 300.1 L724.8 303.6 L727.4 306.1Z" fill="#929292" stroke="#929292"/><path d="M739.3 300.1 L739 298.5 L722.5 300.5 L724.8 303.6Z" fill="#888888" stroke="#888888"/><path d="M739 298.5 L738.9 297 L720.6 297.1 L722.5 300.5Z" fill="#7c7c7c" stroke="#7c7c7c"/><path d="M738.9 297 L739 295.4 L719.5 293.3 L720.6 297.1Z" fill="#6f6f6f" stroke="#6f6f6f"/><path d="M739 295.4 L739.2 293.8 L719.1 289.4 L719.5 293.3Z" fill="#6b6b6b" stroke="#6b6b6b"/><path d="M739.2 293.8 L739.7 292.3 L719.7 285.4 L719.1 289.4Z" fill="#676767" stroke="#676767"/><path d="M739.7 292.3 L740.3 290.8 L721.1 281.7 L719.7 285.4Z" fill="#656565" stroke="#656565"/><path d="M740.3 290.8 L741 289.4 L723.2 278.3 L721.1 281.7Z" fill="#626262" stroke="#626262"/><path d="M741 289.4 L741.9 288.1 L725.9 275.4 L723.2 278.3Z" fill="#606060" stroke="#606060"/><path d="M741.9 288.1 L743 286.9 L728.8 272.9 L725.9 275.4Z" fill="#5f5f5f" stroke="#5f5f5f"/><path d="M743 286.9 L744.2 285.9 L731.9 270.6 L728.8 272.9Z" fill="#5e5e5e" stroke="#5e5e5e"/><path d="M744.2 285.9 L745.4 285 L735.2 268.6 L731.9 270.6Z" fill="#5e5e5e" stroke="#5e5e5e"/><path d="M745.4 285 L746.8 284.2 L738.5 266.9 L735.2 268.6Z" fill="#5e5e5e" stroke="#5e5e5e"/><path d="M746.8 284.2 L748.3 283.6 L741.5 265.7 L738.5 266.9Z" fill="#5f5f5f" stroke="#5f5f5f"/><path d="M748.3 283.6 L752.7 282.1 L746.9 263.9 L741.5 265.7Z" fill="#606060" stroke="#606060"/><path d="M752.7 282.1 L754.2 281.7 L749.4 263.1 L746.9 263.9Z" fill="#616161" stroke="#616161"/><path d="M754.2 281.7 L777 276.4 L773.3 257.7 L749.4 263.1Z" fill="#626262" stroke="#626262"/><path d="M777 276.4 L778.5 276.2 L775.8 257.2 L773.3 257.7Z" fill="#636363" stroke="#636363"/><path d="M778.5 276.2 L801.9 273.5 L800.2 254.2 L775.8 257.2Z" fill="#646464" stroke="#646464"/><path d="M801.9 273.5 L803.4 273.4 L802.7 254 L800.2 254.2Z" fill="#666666" stroke="#666666"/><path d="M803.4 273.4 L826.9 273.3 L827.3 253.7 L802.7 254Z" fill="#676767" stroke="#676767"/><path d="M826.9 273.3 L828.4 273.3 L829.9 253.7 L827.3 253.7Z" fill="#696969" stroke="#696969"/><path d="M828.4 273.3 L851.8 275.7 L854.4 256 L829.9 253.7Z" fill="#6a6a6a" stroke="#6a6a6a"/><path d="M851.8 275.7 L853.3 276 L857 256.2 L854.4 256Z" fill="#6c6c6c" stroke="#6c6c6c"/><path d="M853.3 276 L876.2 280.9 L881 261.2 L857 256.2Z" fill="#6e6e6e" stroke="#6e6e6e"/><path d="M876.2 280.9 L877.7 281.3 L883.7 261.7 L881 261.2Z" fill="#707070" stroke="#707070"/><path d="M877.7 281.3 L899.9 288.8 L907.1 269.2 L883.7 261.7Z" fill="#727272" stroke="#727272"/><path d="M899.9 288.8 L901.4 289.3 L909.7 269.9 L907.1 269.2Z" fill="#747474" stroke="#747474"/><path d="M901.4 289.3 L922.6 299.1 L932.1 279.9 L909.7 269.9Z" fill="#767676" stroke="#767676"/><path d="M922.6 299.1 L923.9 299.8 L934.6 280.9 L932.1 279.9Z" fill="#787878" stroke="#787878"/><path d="M923.9 299.8 L943.9 311.9 L955.8 293.3 L934.6 280.9Z" fill="#7b7b7b" stroke="#7b7b7b"/><path d="M943.9 311.9 L945.2 312.8 L958.3 294.6 L955.8 293.3Z" fill="#7d7d7d" stroke="#7d7d7d"/><path d="M945.2 312.8 L963.7 326.9 L978 309.2 L958.3 294.6Z" fill="#808080" stroke="#808080"/><path d="M963.7 326.9 L964.8 327.9 L980.4 310.8 L978 309.2Z" fill="#828282" stroke="#828282"/><path d="M964.8 327.9 L981.6 344 L998.3 327.5 L980.4 310.8Z" fill="#858585" stroke="#858585"/><path d="M981.6 344 L982.6 345.1 L1000.6 329.3 L998.3 327.5Z" fill="#878787" stroke="#878787"/><path d="M982.6 345.1 L997.4 362.9 L1016.6 347.9 L1000.6 329.3Z" fill="#8a8a8a" stroke="#8a8a8a"/><path d="M997.4 362.9 L998.3 364.2 L1018.7 350 L1016.6 347.9Z" fill="#8c8c8c" stroke="#8c8c8c"/><path d="M998.3 364.2 L1011 383.5 L1032.4 370.3 L1018.7 350Z" fill="#909090" stroke="#909090"/><path d="M1011 383.5 L1011.7 384.8 L1034.3 372.7 L1032.4 370.3Z" fill="#939393" stroke="#939393"/><path d="M1011.7 384.8 L1022.1 405.4 L1045.7 394.3 L1034.3 372.7Z" fill="#969696" stroke="#969696"/><path d="M1022.1 405.4 L1022.7 406.8 L1047.4 397 L1045.7 394.3Z" fill="#999999" stroke="#999999"/><path d="M1022.7 406.8 L1030.6 428.4 L1056.2 419.8 L1047.4 397Z" fill="#9d9d9d" stroke="#9d9d9d"/><path d="M1030.6 428.4 L1031.1 429.9 L1057.6 422.7 L1056.2 419.8Z" fill="#a0a0a0" stroke="#a0a0a0"/><path d="M1031.1 429.9 L1036.4 452.2 L1063.7 446.4 L1057.6 422.7Z" fill="#a3a3a3" stroke="#a3a3a3"/><path d="M1036.4 452.2 L1036.7 453.7 L1064.8 449.5 L1063.7 446.4Z" fill="#a6a6a6" stroke="#a6a6a6"/><path d="M1036.7 453.7 L1039.5 476.4 L1068.2 473.8 L1064.8 449.5Z" fill="#a9a9a9" stroke="#a9a9a9"/><path d="M1039.5 476.4 L1039.6 478 L1068.8 477 L1068.2 473.8Z" fill="#acacac" stroke="#acacac"/><path d="M1039.6 478 L1039.7 500.9 L1069.4 501.6 L1068.8 477Z" fill="#afafaf" stroke="#afafaf"/><path d="M873.5 680.2 L874.5 681.5 L883.1 675.8 L881.4 674Z" fill="#a0a0a0" stroke="#a0a0a0"/><path d="M874.5 681.5 L875.3 682.9 L885.4 677.7 L883.1 675.8Z" fill="#9f9f9f" stroke="#9f9f9f"/><path d="M875.3 682.9 L875.9 684.3 L888.2 679.8 L885.4 677.7Z" fill="#9f9f9f" stroke="#9f9f9f"/><path d="M875.9 684.3 L876.4 685.9 L891.3 682.2 L888.2 679.8Z" fill="#a0a0a0" stroke="#a0a0a0"/><path d="M876.4 685.9 L876.7 687.4 L894.5 685.1 L891.3 682.2Z" fill="#a3a3a3" stroke="#a3a3a3"/><path d="M876.7 687.4 L876.8 689 L897.8 688.7 L894.5 685.1Z" fill="#a9a9a9" stroke="#a9a9a9"/><path d="M876.8 689 L876.7 690.6 L900.8 692.9 L897.8 688.7Z" fill="#b1b1b1" stroke="#b1b1b1"/><path d="M876.7 690.6 L876.5 692.2 L903.1 697.9 L900.8 692.9Z" fill="#b6b6b6" stroke="#b6b6b6"/><path d="M876.5 692.2 L876.1 693.7 L904.4 703.2 L903.1 697.9Z" fill="#bababa" stroke="#bababa"/><path d="M876.1 693.7 L875.5 695.2 L904.4 708.7 L904.4 703.2Z" fill="#bebebe" stroke="#bebebe"/><path d="M875.5 695.2 L874.7 696.6 L902.9 713.9 L904.4 708.7Z" fill="#c1c1c1" stroke="#c1c1c1"/><path d="M874.7 696.6 L873.8 697.9 L900.3 718.6 L902.9 713.9Z" fill="#c3c3c3" stroke="#c3c3c3"/><path d="M873.8 697.9 L872.8 699.1 L897 723 L900.3 718.6Z" fill="#c5c5c5" stroke="#c5c5c5"/><path d="M872.8 699.1 L871.6 700.1 L893.2 727 L897 723Z" fill="#c6c6c6" stroke="#c6c6c6"/><path d="M871.6 700.1 L870.3 701.1 L888.9 730.4 L893.2 727Z" fill="#c6c6c6" stroke="#c6c6c6"/><path d="M870.3 701.1 L868.9 701.8 L884.1 733.2 L888.9 730.4Z" fill="#c5c5c5" stroke="#c5c5c5"/><path d="M868.9 701.8 L867.4 702.4 L879 735.4 L884.1 733.2Z" fill="#c4c4c4" stroke="#c4c4c4"/><path d="M867.4 702.4 L865.9 702.9 L874.6 736.7 L879 735.4Z" fill="#c2c2c2" stroke="#c2c2c2"/><path d="M865.9 702.9 L856 705.2 L862.8 739.3 L874.6 736.7Z" fill="#c1c1c1" stroke="#c1c1c1"/><path d="M856 705.2 L854.5 705.4 L859.4 739.9 L862.8 739.3Z" fill="#c0c0c0" stroke="#c0c0c0"/><path d="M854.5 705.4 L831.1 708.1 L834.2 742.7 L859.4 739.9Z" fill="#bebebe" stroke="#bebebe"/><path d="M831.1 708.1 L829.6 708.2 L830.8 742.8 L834.2 742.7Z" fill="#bcbcbc" stroke="#bcbcbc"/><path d="M829.6 708.2 L806.1 708.3 L805.4 742.8 L830.8 742.8Z" fill="#bbbbbb" stroke="#bbbbbb"/><path d="M806.1 708.3 L804.6 708.3 L802 742.5 L805.4 742.8Z" fill="#b9b9b9" stroke="#b9b9b9"/><path d="M804.6 708.3 L781.2 705.9 L776.8 739.7 L802 742.5Z" fill="#b7b7b7" stroke="#b7b7b7"/><path d="M781.2 705.9 L779.7 705.6 L773.5 739 L776.8 739.7Z" fill="#b4b4b4" stroke="#b4b4b4"/><path d="M779.7 705.6 L756.8 700.7 L748.8 733.4 L773.5 739Z" fill="#b2b2b2" stroke="#b2b2b2"/><path d="M756.8 700.7 L755.3 700.3 L745.6 732.3 L748.8 733.4Z" fill="#b0b0b0" stroke="#b0b0b0"/><path d="M755.3 700.3 L733.1 692.8 L721.7 724 L745.6 732.3Z" fill="#adadad" stroke="#adadad"/><path d="M733.1 692.8 L731.6 692.3 L718.7 722.5 L721.7 724Z" fill="#aaaaaa" stroke="#aaaaaa"/><path d="M731.6 692.3 L710.4 682.5 L695.9 711.7 L718.7 722.5Z" fill="#a8a8a8" stroke="#a8a8a8"/><path d="M710.4 682.5 L709.1 681.8 L693.1 709.9 L695.9 711.7Z" fill="#a5a5a5" stroke="#a5a5a5"/><path d="M709.1 681.8 L689.1 669.7 L671.8 696.6 L693.1 709.9Z" fill="#a2a2a2" stroke="#a2a2a2"/><path d="M689.1 669.7 L687.8 668.8 L669.3 694.5 L671.8 696.6Z" fill="#9f9f9f" stroke="#9f9f9f"/><path d="M687.8 668.8 L669.3 654.7 L649.6 679 L669.3 694.5Z" fill="#9c9c9c" stroke="#9c9c9c"/><path d="M669.3 654.7 L668.2 653.7 L647.4 676.5 L649.6 679Z" fill="#999999" stroke="#999999"/><path d="M668.2 653.7 L651.4 637.6 L629.7 659 L647.4 676.5Z" fill="#959595" stroke="#959595"/><path d="M651.4 637.6 L650.4 636.5 L627.8 656.3 L629.7 659Z" fill="#929292" stroke="#929292"/><path d="M650.4 636.5 L635.6 618.7 L612.3 637 L627.8 656.3Z" fill="#8f8f8f" stroke="#8f8f8f"/><path d="M635.6 618.7 L634.7 617.4 L610.7 634.1 L612.3 637Z" fill="#8c8c8c" stroke="#8c8c8c"/><path d="M634.7 617.4 L622 598.1 L597.5 613.2 L610.7 634.1Z" fill="#898989" stroke="#898989"/><path d="M622 598.1 L621.3 596.8 L596.3 610.2 L597.5 613.2Z" fill="#868686" stroke="#868686"/><path d="M621.3 596.8 L610.9 576.2 L585.6 588.1 L596.3 610.2Z" fill="#848484" stroke="#848484"/><path d="M610.9 576.2 L610.3 574.8 L584.8 585 L585.6 588.1Z" fill="#818181" stroke="#818181"/><path d="M610.3 574.8 L602.4 553.2 L576.8 561.8 L584.8 585Z" fill="#7f7f7f" stroke="#7f7f7f"/><path d="M602.4 553.2 L601.9 551.7 L576.3 558.7 L576.8 561.8Z" fill="#7c7c7c" stroke="#7c7c7c"/><path d="M601.9 551.7 L596.6 529.4 L571 534.8 L576.3 558.7Z" fill="#7a7a7a" stroke="#7a7a7a"/><path d="M596.6 529.4 L596.3 527.9 L570.9 531.7 L571 534.8Z" fill="#777777" stroke="#777777"/><path d="M596.3 527.9 L593.5 505.2 L568.4 507.5 L570.9 531.7Z" fill="#757575" stroke="#757575"/><path d="M593.5 505.2 L593.4 503.6 L568.6 504.4 L568.4 507.5Z" fill="#737373" stroke="#737373"/><path d="M593.4 503.6 L593.3 480.7 L568.9 480.2 L568.6 504.4Z" fill="#717171" stroke="#717171"/><path d="M593.3 480.7 L593.3 479.1 L569.5 477.2 L568.9 480.2Z" fill="#6f6f6f" stroke="#6f6f6f"/><path d="M593.3 479.1 L595.8 456.4 L572.6 453.1 L569.5 477.2Z" fill="#6d6d6d" stroke="#6d6d6d"/><path d="M595.8 456.4 L596.1 454.8 L573.4 450.3 L572.6 453.1Z" fill="#6b6b6b" stroke="#6b6b6b"/><path d="M596.1 454.8 L601.2 432.5 L579.2 426.8 L573.4 450.3Z" fill="#696969" stroke="#696969"/><path d="M601.2 432.5 L601.6 430.9 L580.4 424.1 L579.2 426.8Z" fill="#676767" stroke="#676767"/><path d="M601.6 430.9 L609.3 409.3 L588.7 401.4 L580.4 424.1Z" fill="#666666" stroke="#666666"/><path d="M609.3 409.3 L609.9 407.8 L590.2 398.9 L588.7 401.4Z" fill="#646464" stroke="#646464"/><path d="M609.9 407.8 L613.4 400.5 L594.5 390.7 L590.2 398.9Z" fill="#636363" stroke="#636363"/><path d="M613.4 400.5 L614.2 399.2 L596.5 388 L594.5 390.7Z" fill="#626262" stroke="#626262"/><path d="M614.2 399.2 L615.1 397.9 L599.2 385.2 L596.5 388Z" fill="#606060" stroke="#606060"/><path d="M615.1 397.9 L616.1 396.8 L602 382.7 L599.2 385.2Z" fill="#5f5f5f" stroke="#5f5f5f"/><path d="M616.1 396.8 L617.3 395.7 L605 380.4 L602 382.7Z" fill="#5e5e5e" stroke="#5e5e5e"/><path d="M617.3 395.7 L618.5 394.8 L608.2 378.5 L605 380.4Z" fill="#5e5e5e" stroke="#5e5e5e"/><path d="M618.5 394.8 L619.9 394.1 L611.5 376.8 L608.2 378.5Z" fill="#5e5e5e" stroke="#5e5e5e"/><path d="M619.9 394.1 L621.3 393.5 L614.9 375.5 L611.5 376.8Z" fill="#5f5f5f" stroke="#5f5f5f"/><path d="M621.3 393.5 L622.8 393 L618.4 374.7 L614.9 375.5Z" fill="#616161" stroke="#616161"/><path d="M622.8 393 L624.3 392.8 L622.1 374.6 L618.4 374.7Z" fill="#636363" stroke="#636363"/><path d="M624.3 392.8 L625.9 392.7 L625.7 375.1 L622.1 374.6Z" fill="#656565" stroke="#656565"/><path d="M625.9 392.7 L627.4 392.7 L629 376.2 L625.7 375.1Z" fill="#686868" stroke="#686868"/><path d="M627.4 392.7 L628.9 393 L632.2 377.7 L629 376.2Z" fill="#6d6d6d" stroke="#6d6d6d"/><path d="M628.9 393 L630.4 393.4 L635 379.7 L632.2 377.7Z" fill="#7b7b7b" stroke="#7b7b7b"/><path d="M630.4 393.4 L631.9 394 L637.4 381.9 L635 379.7Z" fill="#878787" stroke="#878787"/><path d="M631.9 394 L633.2 394.7 L639.5 384.3 L637.4 381.9Z" fill="#929292" stroke="#929292"/><path d="M633.2 394.7 L634.5 395.5 L641.2 386.8 L639.5 384.3Z" fill="#999999" stroke="#999999"/><path d="M634.5 395.5 L635.7 396.6 L642.8 389.1 L641.2 386.8Z" fill="#9e9e9e" stroke="#9e9e9e"/><path d="M635.7 396.6 L636.7 397.7 L644.2 391 L642.8 389.1Z" fill="#a0a0a0" stroke="#a0a0a0"/><path d="M636.7 397.7 L873.5 680.2 L881.4 674 L644.2 391Z" fill="#a0a0a0" stroke="#a0a0a0"/></g><g stroke-width="0.8" filter="url(#b2)"><path d="M741.1 304.4 L740.4 303.1 L740.2 303.1 L741.1 304.4Z" fill="#343434" stroke="#343434"/><path d="M740.4 303.1 L739.7 301.6 L739.2 301.8 L740.2 303.1Z" fill="#343434" stroke="#343434"/><path d="M739.7 301.6 L739.3 300.1 L738.1 300.4 L739.2 301.8Z" fill="#343434" stroke="#343434"/><path d="M739.3 300.1 L739 298.5 L736.9 298.8 L738.1 300.4Z" fill="#343434" stroke="#343434"/><path d="M739 298.5 L738.9 297 L735.5 297 L736.9 298.8Z" fill="#343434" stroke="#343434"/><path d="M738.9 297 L739 295.4 L734.2 294.9 L735.5 297Z" fill="#343434" stroke="#343434"/><path d="M739 295.4 L739.2 293.8 L733.2 292.5 L734.2 294.9Z" fill="#343434" stroke="#343434"/><path d="M739.2 293.8 L739.7 292.3 L732.5 289.8 L733.2 292.5Z" fill="#343434" stroke="#343434"/><path d="M739.7 292.3 L740.3 290.8 L732.4 287.1 L732.5 289.8Z" fill="#343434" stroke="#343434"/><path d="M740.3 290.8 L741 289.4 L733.1 284.5 L732.4 287.1Z" fill="#343434" stroke="#343434"/><path d="M741 289.4 L741.9 288.1 L734.3 282.1 L733.1 284.5Z" fill="#343434" stroke="#343434"/><path d="M741.9 288.1 L743 286.9 L736 279.9 L734.3 282.1Z" fill="#343434" stroke="#343434"/><path d="M743 286.9 L744.2 285.9 L737.9 278.1 L736 279.9Z" fill="#343434" stroke="#343434"/><path d="M744.2 285.9 L745.4 285 L740.1 276.5 L737.9 278.1Z" fill="#343434" stroke="#343434"/><path d="M745.4 285 L746.8 284.2 L742.6 275.4 L740.1 276.5Z" fill="#343434" stroke="#343434"/><path d="M746.8 284.2 L748.3 283.6 L744.9 274.6 L742.6 275.4Z" fill="#343434" stroke="#343434"/><path d="M748.3 283.6 L752.7 282.1 L749.8 273.1 L744.9 274.6Z" fill="#343434" stroke="#343434"/><path d="M752.7 282.1 L754.2 281.7 L751.9 272.7 L749.8 273.1Z" fill="#343434" stroke="#343434"/><path d="M754.2 281.7 L777 276.4 L775.3 267.6 L751.9 272.7Z" fill="#343434" stroke="#343434"/><path d="M777 276.4 L778.5 276.2 L777.3 267.5 L775.3 267.6Z" fill="#343434" stroke="#343434"/><path d="M778.5 276.2 L801.9 273.5 L801.1 265 L777.3 267.5Z" fill="#343434" stroke="#343434"/><path d="M801.9 273.5 L803.4 273.4 L803.1 265.2 L801.1 265Z" fill="#343434" stroke="#343434"/><path d="M803.4 273.4 L826.9 273.3 L827.1 265.4 L803.1 265.2Z" fill="#343434" stroke="#343434"/><path d="M826.9 273.3 L828.4 273.3 L829 265.8 L827.1 265.4Z" fill="#343434" stroke="#343434"/><path d="M828.4 273.3 L851.8 275.7 L852.7 268.7 L829 265.8Z" fill="#343434" stroke="#343434"/><path d="M851.8 275.7 L853.3 276 L854.5 269.3 L852.7 268.7Z" fill="#343434" stroke="#343434"/><path d="M853.3 276 L876.2 280.9 L877.7 274.8 L854.5 269.3Z" fill="#343434" stroke="#343434"/><path d="M876.2 280.9 L877.7 281.3 L879.4 275.7 L877.7 274.8Z" fill="#343434" stroke="#343434"/><path d="M877.7 281.3 L899.9 288.8 L901.8 283.6 L879.4 275.7Z" fill="#343434" stroke="#343434"/><path d="M899.9 288.8 L901.4 289.3 L903.3 284.7 L901.8 283.6Z" fill="#343434" stroke="#343434"/><path d="M901.4 289.3 L922.6 299.1 L924.6 295.1 L903.3 284.7Z" fill="#343434" stroke="#343434"/><path d="M922.6 299.1 L923.9 299.8 L925.9 296.4 L924.6 295.1Z" fill="#343434" stroke="#343434"/><path d="M923.9 299.8 L943.9 311.9 L945.8 308.9 L925.9 296.4Z" fill="#343434" stroke="#343434"/><path d="M943.9 311.9 L945.2 312.8 L946.9 310.4 L945.8 308.9Z" fill="#343434" stroke="#343434"/><path d="M945.2 312.8 L963.7 326.9 L965.2 325 L946.9 310.4Z" fill="#343434" stroke="#343434"/><path d="M963.7 326.9 L964.8 327.9 L966.1 326.5 L965.2 325Z" fill="#343434" stroke="#343434"/><path d="M964.8 327.9 L981.6 344 L982.5 343 L966.1 326.5Z" fill="#343434" stroke="#343434"/><path d="M981.6 344 L982.6 345.1 L983.2 344.6 L982.5 343Z" fill="#343434" stroke="#343434"/><path d="M634.7 617.4 L622 598.1 L621.3 598.6 L634.4 617.6Z" fill="#343434" stroke="#343434"/><path d="M622 598.1 L621.3 596.8 L619.9 597.5 L621.3 598.6Z" fill="#343434" stroke="#343434"/><path d="M621.3 596.8 L610.9 576.2 L609.1 577.1 L619.9 597.5Z" fill="#343434" stroke="#343434"/><path d="M610.9 576.2 L610.3 574.8 L607.9 575.7 L609.1 577.1Z" fill="#343434" stroke="#343434"/><path d="M610.3 574.8 L602.4 553.2 L599.4 554.2 L607.9 575.7Z" fill="#343434" stroke="#343434"/><path d="M602.4 553.2 L601.9 551.7 L598.4 552.7 L599.4 554.2Z" fill="#343434" stroke="#343434"/><path d="M601.9 551.7 L596.6 529.4 L592.4 530.3 L598.4 552.7Z" fill="#343434" stroke="#343434"/><path d="M596.6 529.4 L596.3 527.9 L591.6 528.6 L592.4 530.3Z" fill="#343434" stroke="#343434"/><path d="M596.3 527.9 L593.5 505.2 L588.3 505.7 L591.6 528.6Z" fill="#343434" stroke="#343434"/><path d="M593.5 505.2 L593.4 503.6 L587.7 503.8 L588.3 505.7Z" fill="#343434" stroke="#343434"/><path d="M593.4 503.6 L593.3 480.7 L587.1 480.6 L587.7 503.8Z" fill="#343434" stroke="#343434"/><path d="M593.3 480.7 L593.3 479.1 L586.7 478.6 L587.1 480.6Z" fill="#343434" stroke="#343434"/><path d="M593.3 479.1 L595.8 456.4 L588.9 455.4 L586.7 478.6Z" fill="#343434" stroke="#343434"/><path d="M595.8 456.4 L596.1 454.8 L588.8 453.3 L588.9 455.4Z" fill="#343434" stroke="#343434"/><path d="M596.1 454.8 L601.2 432.5 L593.6 430.5 L588.8 453.3Z" fill="#343434" stroke="#343434"/><path d="M601.2 432.5 L601.6 430.9 L593.9 428.4 L593.6 430.5Z" fill="#343434" stroke="#343434"/><path d="M601.6 430.9 L609.3 409.3 L601.3 406.3 L593.9 428.4Z" fill="#343434" stroke="#343434"/><path d="M609.3 409.3 L609.9 407.8 L601.9 404.2 L601.3 406.3Z" fill="#343434" stroke="#343434"/><path d="M609.9 407.8 L613.4 400.5 L605.4 396.4 L601.9 404.2Z" fill="#343434" stroke="#343434"/><path d="M613.4 400.5 L614.2 399.2 L606.3 394.2 L605.4 396.4Z" fill="#343434" stroke="#343434"/><path d="M614.2 399.2 L615.1 397.9 L607.5 391.9 L606.3 394.2Z" fill="#343434" stroke="#343434"/><path d="M615.1 397.9 L616.1 396.8 L609.1 389.8 L607.5 391.9Z" fill="#343434" stroke="#343434"/><path d="M616.1 396.8 L617.3 395.7 L611 387.9 L609.1 389.8Z" fill="#343434" stroke="#343434"/><path d="M617.3 395.7 L618.5 394.8 L613.2 386.4 L611 387.9Z" fill="#343434" stroke="#343434"/><path d="M618.5 394.8 L619.9 394.1 L615.6 385.2 L613.2 386.4Z" fill="#343434" stroke="#343434"/><path d="M619.9 394.1 L621.3 393.5 L618.1 384.5 L615.6 385.2Z" fill="#343434" stroke="#343434"/><path d="M621.3 393.5 L622.8 393 L620.7 384.4 L618.1 384.5Z" fill="#343434" stroke="#343434"/><path d="M622.8 393 L624.3 392.8 L623.4 385.1 L620.7 384.4Z" fill="#343434" stroke="#343434"/><path d="M624.3 392.8 L625.9 392.7 L625.8 386.3 L623.4 385.1Z" fill="#343434" stroke="#343434"/><path d="M625.9 392.7 L627.4 392.7 L627.9 387.8 L625.8 386.3Z" fill="#343434" stroke="#343434"/><path d="M627.4 392.7 L628.9 393 L629.7 389.5 L627.9 387.8Z" fill="#343434" stroke="#343434"/><path d="M628.9 393 L630.4 393.4 L631.2 391.1 L629.7 389.5Z" fill="#343434" stroke="#343434"/><path d="M630.4 393.4 L631.9 394 L632.4 392.7 L631.2 391.1Z" fill="#343434" stroke="#343434"/><path d="M631.9 394 L633.2 394.7 L633.6 394.1 L632.4 392.7Z" fill="#343434" stroke="#343434"/><path d="M633.2 394.7 L634.5 395.5 L634.6 395.4 L633.6 394.1Z" fill="#343434" stroke="#343434"/><path d="M634.5 395.5 L635.7 396.6 L635.7 396.5 L634.6 395.4Z" fill="#343434" stroke="#343434"/><path d="M635.7 396.6 L636.7 397.7 L636.7 397.7 L635.7 396.5Z" fill="#343434" stroke="#343434"/><path d="M636.7 397.7 L873.5 680.2 L873.5 680.2 L636.7 397.7Z" fill="#343434" stroke="#343434"/></g></g><g mask="url(#mobj)"><path d="M480 568.5 H1160 M480 694.5 H1160 M55 499 L-1435.9 974 M309 499 L-674.9 974 M563 499 L86 974 M1071 499 L1607.9 974 M1325 499 L2368.8 974 M1579 499 L3129.7 974" stroke="#4a4a4a" stroke-opacity="0.24" stroke-width="1" fill="none"/><path d="M817 499 L847.2 974" stroke="#a04048" stroke-width="1" stroke-opacity="0.8"/></g></svg><div class="abs" style="left:8px;top:3.5px;width:26px;height:15.5px;background:rgba(38,38,38,0.9);border-radius:3px;"></div><svg style="left:10px;top:4px" width="14" height="14" viewBox="0 0 16 16" ><circle cx="10.5" cy="4.5" r="3.3" fill="#e6e6e6"/><circle cx="9.6" cy="3.6" r="1.2" fill="#fff"/><path d="M1.5 9.5 H13.5 M1 13.5 H14 M5 7.5 L3.5 15.5 M10.5 8.5 L11.5 15.5" stroke="#dcdcdc" stroke-width="1.1" fill="none"/></svg><svg style="left:25.5px;top:9.5px" width="7" height="4.6" viewBox="0 0 7 4.6"><path d="M0.6 0.6 L3.5 3.6 L6.4 0.6" fill="none" stroke="#d0d0d0" stroke-width="1.15" stroke-linecap="round" stroke-linejoin="round"/></svg><div class="abs" style="left:40px;top:3px;width:97px;height:16.5px;background:rgba(38,38,38,0.9);border-radius:3px;"></div><svg style="left:43px;top:4px" width="14" height="14" viewBox="0 0 16 16" ><path d="M1.5 5 V1.5 H5 M11 1.5 H14.5 V5 M14.5 11 V14.5 H11 M5 14.5 H1.5 V11" fill="none" stroke="#dcdcdc" stroke-width="1.3"/><rect x="4" y="4" width="8" height="8" fill="#e8e8e8"/></svg><div class="t" style="left:62px;top:5px;color:#e6e6e6;">Объекты</div><svg style="left:126.5px;top:9.5px" width="7" height="4.6" viewBox="0 0 7 4.6"><path d="M0.6 0.6 L3.5 3.6 L6.4 0.6" fill="none" stroke="#d0d0d0" stroke-width="1.15" stroke-linecap="round" stroke-linejoin="round"/></svg><div class="t" style="left:149px;top:5px;color:#dddddd;">Вид</div><div class="t" style="left:181px;top:5px;color:#dddddd;">Выделение</div><div class="t" style="left:250px;top:5px;color:#dddddd;">Добавить</div><div class="t" style="left:309px;top:5px;color:#dddddd;">Объект</div><div class="abs" style="left:38.5px;top:27px;width:15.5px;height:15.5px;background:#4772b3;border-radius:3px 0 0 3px;"></div><div class="abs" style="left:56.0px;top:27px;width:16.5px;height:15.5px;background:#555555;border-radius:0;border-left:1px solid #3a3a3a;"></div><div class="abs" style="left:73.0px;top:27px;width:16.5px;height:15.5px;background:#555555;border-radius:0;border-left:1px solid #3a3a3a;"></div><div class="abs" style="left:90.0px;top:27px;width:16.5px;height:15.5px;background:#555555;border-radius:0;border-left:1px solid #3a3a3a;"></div><div class="abs" style="left:107.0px;top:27px;width:15.5px;height:15.5px;background:#555555;border-radius:0 3px 3px 0;border-left:1px solid #3a3a3a;"></div><svg style="left:40.5px;top:29px" width="11.5" height="11.5" viewBox="0 0 12 12" ><rect x="1" y="1" width="10" height="10" fill="none" stroke="#fff" stroke-width="1.3" stroke-dasharray="1.6 1.25"/></svg><svg style="left:58px;top:29px" width="11.5" height="11.5" viewBox="0 0 12 12" ><path d="M4 1 H11 V8 H8 V11 H1 V4 H4 Z" fill="#d9d9d9"/></svg><svg style="left:75px;top:29px" width="11.5" height="11.5" viewBox="0 0 12 12" ><path d="M5 1 H11 V7 H8 V4 H5 Z" fill="#d9d9d9"/><rect x="1" y="5" width="6" height="6" fill="none" stroke="#d9d9d9" stroke-width="1" stroke-dasharray="1.5 1.2"/></svg><svg style="left:92px;top:29px" width="11.5" height="11.5" viewBox="0 0 12 12" ><path d="M4 1 H11 V8 H8 V4 H4 Z M1 4 H4 V8 H8 V11 H1 Z" fill="#d9d9d9"/></svg><svg style="left:109px;top:29px" width="11.5" height="11.5" viewBox="0 0 12 12" ><rect x="1" y="1" width="10" height="10" fill="none" stroke="#d9d9d9" stroke-width="1" stroke-dasharray="1.6 1.25"/><rect x="3.7" y="3.7" width="4.6" height="4.6" fill="#d9d9d9"/></svg><div class="abs" style="left:680.5px;top:3px;width:70.5px;height:16px;background:rgba(38,38,38,0.9);border-radius:3px;"></div><svg style="left:684px;top:4px" width="14" height="14" viewBox="0 0 16 16" ><path d="M3.5 14 V2 M1.5 4 L3.5 1.5 L5.5 4 M3.5 12.5 H14 M12 10.5 L14.5 12.5 L12 14.5 M3.5 12.5 L10 6.5 M10 6.5 V9.5 M10 6.5 H7" fill="none" stroke="#dcdcdc" stroke-width="1.1"/><circle cx="3.5" cy="12.5" r="1.6" fill="none" stroke="#dcdcdc" stroke-width="1"/></svg><div class="t" style="left:703.5px;top:5px;color:#e6e6e6;">Глоба...</div><svg style="left:742.5px;top:9.5px" width="7" height="4.6" viewBox="0 0 7 4.6"><path d="M0.6 0.6 L3.5 3.6 L6.4 0.6" fill="none" stroke="#d0d0d0" stroke-width="1.15" stroke-linecap="round" stroke-linejoin="round"/></svg><div class="abs" style="left:757.5px;top:3px;width:25.5px;height:16px;background:rgba(38,38,38,0.9);border-radius:3px;"></div><svg style="left:759.5px;top:4px" width="14" height="14" viewBox="0 0 16 16" ><circle cx="6" cy="9.5" r="3.6" fill="none" stroke="#dcdcdc" stroke-width="1.3"/><circle cx="10" cy="6" r="3.6" fill="none" stroke="#dcdcdc" stroke-width="1.3"/><circle cx="8" cy="7.7" r="1.3" fill="#dcdcdc"/></svg><svg style="left:774.5px;top:9.5px" width="7" height="4.6" viewBox="0 0 7 4.6"><path d="M0.6 0.6 L3.5 3.6 L6.4 0.6" fill="none" stroke="#d0d0d0" stroke-width="1.15" stroke-linecap="round" stroke-linejoin="round"/></svg><div class="abs" style="left:789.5px;top:3px;width:16.5px;height:16px;background:#555555;border-radius:3px 0 0 3px;"></div><div class="abs" style="left:806px;top:3px;width:26.5px;height:16px;background:rgba(38,38,38,0.9);border-radius:0 3px 3px 0;"></div><svg style="left:791px;top:4px" width="14" height="14" viewBox="0 0 16 16" ><path d="M3 8 C2 3 6 1.5 9.5 3 C13 4.5 13.5 9 11.5 12.5 M5.5 8 C5 5.5 7 4.2 9 5.2 C11 6.2 11 9.5 9.8 11.5 M11.5 12.5 L9.8 11.5 M3 8 L5.5 8" fill="none" stroke="#9a9a9a" stroke-width="1.3" stroke-linecap="round"/></svg><svg style="left:808px;top:4px" width="14" height="14" viewBox="0 0 16 16" ><path d="M1.5 11.5 H12.5 M1.5 9 V14 M5.2 10 V13 M8.8 10 V13 M12.5 9 V14" fill="none" stroke="#dcdcdc" stroke-width="1.1"/><rect x="10" y="2.5" width="3.6" height="3.6" fill="#f0f0f0"/></svg><svg style="left:824px;top:9.5px" width="7" height="4.6" viewBox="0 0 7 4.6"><path d="M0.6 0.6 L3.5 3.6 L6.4 0.6" fill="none" stroke="#d0d0d0" stroke-width="1.15" stroke-linecap="round" stroke-linejoin="round"/></svg><div class="abs" style="left:838.5px;top:3px;width:17px;height:16px;background:#555555;border-radius:3px 0 0 3px;"></div><div class="abs" style="left:855.5px;top:3px;width:26.5px;height:16px;background:rgba(40,40,40,0.55);border-radius:0 3px 3px 0;"></div><svg style="left:840px;top:4px" width="14" height="14" viewBox="0 0 16 16" ><circle cx="8" cy="8" r="5.5" fill="none" stroke="#7d7d7d" stroke-width="1.2"/><circle cx="8" cy="8" r="2.2" fill="#a8a8a8"/></svg><svg style="left:857.5px;top:4px" width="14" height="14" viewBox="0 0 16 16" ><path d="M1.5 13 C5 13 5.5 3 8 3 C10.500 3 11 13 14.5 13" fill="none" stroke="#777" stroke-width="1.3" stroke-linecap="round"/></svg><svg style="left:873.5px;top:9.5px" width="7" height="4.6" viewBox="0 0 7 4.6"><path d="M0.6 0.6 L3.5 3.6 L6.4 0.6" fill="none" stroke="#5a5a5a" stroke-width="1.15" stroke-linecap="round" stroke-linejoin="round"/></svg><div class="abs" style="left:1357px;top:2.5px;width:26px;height:17px;background:rgba(38,38,38,0.9);border-radius:3px;"></div><svg style="left:1359px;top:3.5px" width="15" height="15" viewBox="0 0 16 16" ><path d="M4.5 5.2 C6.5 2.2 11.5 2.2 14 5.2 C11.5 8.2 6.5 8.2 4.5 5.2 Z" fill="#dcdcdc"/><circle cx="9.2" cy="5.2" r="1.7" fill="#262626"/><path d="M1.5 8 L8 10.8 L5.2 11.8 L3.8 14.8 Z" fill="#dcdcdc"/></svg><svg style="left:1374.5px;top:9.5px" width="7" height="4.6" viewBox="0 0 7 4.6"><path d="M0.6 0.6 L3.5 3.6 L6.4 0.6" fill="none" stroke="#d0d0d0" stroke-width="1.15" stroke-linecap="round" stroke-linejoin="round"/></svg><div class="abs" style="left:1389px;top:2.5px;width:16px;height:17px;background:#4772b3;border-radius:3px 0 0 3px;"></div><div class="abs" style="left:1405.5px;top:2.5px;width:17.5px;height:17px;background:rgba(38,38,38,0.9);border-radius:0 3px 3px 0;"></div><svg style="left:1390px;top:4px" width="14" height="14" viewBox="0 0 16 16" ><path d="M3 13 L12.5 3.5 M8.5 2.8 H13.2 V7.5" fill="none" stroke="#dfe9f7" stroke-width="1.3"/><circle cx="3.4" cy="12.6" r="1.7" fill="none" stroke="#dfe9f7" stroke-width="1.1"/><path d="M1.5 5.5 C6 5 10.500 9 11 14" fill="none" stroke="#dfe9f7" stroke-width="1.2"/></svg><svg style="left:1410.5px;top:9.5px" width="7" height="4.6" viewBox="0 0 7 4.6"><path d="M0.6 0.6 L3.5 3.6 L6.4 0.6" fill="none" stroke="#d0d0d0" stroke-width="1.15" stroke-linecap="round" stroke-linejoin="round"/></svg><div class="abs" style="left:1429px;top:2.5px;width:16px;height:17px;background:#4772b3;border-radius:3px 0 0 3px;"></div><div class="abs" style="left:1445.5px;top:2.5px;width:17.5px;height:17px;background:rgba(38,38,38,0.9);border-radius:0 3px 3px 0;"></div><svg style="left:1430px;top:4px" width="14" height="14" viewBox="0 0 16 16" ><circle cx="9.5" cy="6" r="4.8" fill="#e8eef8"/><circle cx="9.5" cy="6" r="1.5" fill="#4772b3"/><path d="M8 13.500 A4.6 4.6 0 0 1 3.500 7" fill="none" stroke="#e8eef8" stroke-width="1.4"/><circle cx="6.5" cy="9.500" r="4.6" fill="none" stroke="#e8eef8" stroke-width="1.3" stroke-dasharray="9 20" stroke-dashoffset="-6"/></svg><svg style="left:1450.5px;top:9.5px" width="7" height="4.6" viewBox="0 0 7 4.6"><path d="M0.6 0.6 L3.5 3.6 L6.4 0.6" fill="none" stroke="#d0d0d0" stroke-width="1.15" stroke-linecap="round" stroke-linejoin="round"/></svg><div class="abs" style="left:1469px;top:2.5px;width:16px;height:17px;background:#555555;border-radius:3px;"></div><svg style="left:1470px;top:4px" width="14" height="14" viewBox="0 0 16 16" ><path d="M5 4.500 V2 H14 V11 H11.500" fill="none" stroke="#dcdcdc" stroke-width="1.2"/><rect x="2" y="5" width="9" height="9" fill="none" stroke="#dcdcdc" stroke-width="1.3"/><path d="M4.500 10 H7 V7.500" fill="none" stroke="#dcdcdc" stroke-width="1" stroke-dasharray="1.2 1"/></svg><div class="abs" style="left:1491px;top:2.5px;width:16.5px;height:17px;background:#555555;border-radius:3px 0 0 3px;"></div><div class="abs" style="left:1507.5px;top:2.5px;width:16.5px;height:17px;background:#4772b3;border-radius:0;"></div><div class="abs" style="left:1524.5px;top:2.5px;width:16.5px;height:17px;background:#555555;border-radius:0;border-left:1px solid #3a3a3a;"></div><div class="abs" style="left:1541.5px;top:2.5px;width:17px;height:17px;background:#555555;border-radius:0;border-left:1px solid #3a3a3a;"></div><div class="abs" style="left:1558.5px;top:2.5px;width:17px;height:17px;background:rgba(38,38,38,0.9);border-radius:0 3px 3px 0;"></div><svg style="left:1492.5px;top:4px" width="14" height="14" viewBox="0 0 16 16" ><circle cx="8" cy="8" r="5.600" fill="none" stroke="#bdbdbd" stroke-width="1.2"/><path d="M8 2.400 V13.600 M2.400 8 H13.600" stroke="#bdbdbd" stroke-width="1"/><path d="M3.500 5 Q8 3.500 12.500 5" fill="none" stroke="#bdbdbd" stroke-width="0.9"/></svg><svg style="left:1509px;top:4px" width="14" height="14" viewBox="0 0 16 16" ><circle cx="8" cy="8" r="6" fill="#ffffff"/></svg><svg style="left:1526px;top:4px" width="14" height="14" viewBox="0 0 16 16" ><circle cx="8" cy="8" r="5.600" fill="none" stroke="#cfcfcf" stroke-width="1.2"/><path d="M8 2.400 A5.600 5.600 0 0 0 8 13.600 Z" fill="#cfcfcf"/><path d="M8 8 H13.600 A5.600 5.600 0 0 1 8 13.600 Z" fill="#8a8a8a"/></svg><svg style="left:1543px;top:4px" width="14" height="14" viewBox="0 0 16 16" ><circle cx="8" cy="8" r="5.600" fill="#6f6f6f" stroke="#c4c4c4" stroke-width="1.2"/><path d="M4.500 7 A4 4 0 0 1 9 3.800" fill="none" stroke="#d8d8d8" stroke-width="1.2" stroke-linecap="round"/></svg><svg style="left:1563.5px;top:9.5px" width="7" height="4.6" viewBox="0 0 7 4.6"><path d="M0.6 0.6 L3.5 3.6 L6.4 0.6" fill="none" stroke="#d0d0d0" stroke-width="1.15" stroke-linecap="round" stroke-linejoin="round"/></svg><div class="abs" style="left:1525px;top:27px;width:52px;height:16px;background:rgba(38,38,38,0.9);border-radius:3px;"></div><div class="t" style="left:1531px;top:29px;color:#e6e6e6;">Опции</div><svg style="left:1566.5px;top:33.5px" width="7" height="4.6" viewBox="0 0 7 4.6"><path d="M0.6 0.6 L3.5 3.6 L6.4 0.6" fill="none" stroke="#d0d0d0" stroke-width="1.15" stroke-linecap="round" stroke-linejoin="round"/></svg><svg style="left:1575.5px;top:60px" width="6" height="10" viewBox="0 0 6 10" ><path d="M5 1 L1.200 5 L5 9" fill="none" stroke="#c8c8c8" stroke-width="1.2"/></svg><div class="t" style="left:58px;top:54px;color:#f2f2f2;text-shadow:0 0 2px #000,0 0 1px #000;">Пользовательская перспектива</div><div class="t" style="left:58px;top:71px;color:#f2f2f2;text-shadow:0 0 2px #000,0 0 1px #000;">(1) Collection | Red Circle With Slash</div><div class="abs" style="left:7px;top:52.5px;width:34.5px;height:29.5px;background:#4772b3;border-radius:4px 4px 0 0;"></div><div class="abs" style="left:7px;top:82.5px;width:34.5px;height:30.5px;background:rgba(38,38,38,0.9);border-radius:0 0 4px 4px;"></div><div class="abs" style="left:7px;top:119px;width:34.5px;height:29px;background:rgba(38,38,38,0.9);border-radius:4px 4px 0 0;"></div><div class="abs" style="left:7px;top:148.5px;width:34.5px;height:30.5px;background:rgba(38,38,38,0.9);border-radius:0;"></div><div class="abs" style="left:7px;top:179.5px;width:34.5px;height:30.5px;background:rgba(38,38,38,0.9);border-radius:0;"></div><div class="abs" style="left:7px;top:210.5px;width:34.5px;height:30.5px;background:rgba(38,38,38,0.9);border-radius:0 0 4px 4px;"></div><div class="abs" style="left:7px;top:247px;width:34.5px;height:29.5px;background:rgba(38,38,38,0.9);border-radius:4px 4px 0 0;"></div><div class="abs" style="left:7px;top:277px;width:34.5px;height:30.5px;background:rgba(38,38,38,0.9);border-radius:0 0 4px 4px;"></div><div class="abs" style="left:7px;top:313.5px;width:34.5px;height:29.5px;background:rgba(38,38,38,0.9);border-radius:4px;"></div><svg style="left:12px;top:55px" width="24" height="24" viewBox="0 0 24 24" ><rect x="2.500" y="3.500" width="19" height="17" fill="none" stroke="#a9bfe0" stroke-width="1.3" stroke-dasharray="3.200 1.800"/><path d="M9.500 7.500 L16.500 13.800 L12.300 14.200 L10.300 17.800 Z" fill="#fff"/></svg><svg style="left:36.5px;top:77px" width="4" height="4" viewBox="0 0 4 4" ><path d="M4 0 V4 H0 Z" fill="#9a9a9a"/></svg><svg style="left:12px;top:86px" width="24" height="24" viewBox="0 0 24 24" ><circle cx="12" cy="12" r="8.600" fill="none" stroke="#e8e8e8" stroke-width="1.3" stroke-dasharray="4.500 2.250"/><circle cx="12" cy="12" r="8.600" fill="none" stroke="#d9736b" stroke-width="1.3" stroke-dasharray="2.250 4.500" stroke-dashoffset="-4.500"/><path d="M12 6 V10 M12 14 V18 M6 12 H10 M14 12 H18" stroke="#d0d0d0" stroke-width="1.300"/></svg><svg style="left:12px;top:122px" width="24" height="24" viewBox="0 0 24 24" ><path d="M12 3 L14.800 6.500 H9.200 Z M12 21 L14.800 17.500 H9.200 Z M3 12 L6.500 9.200 V14.800 Z M21 12 L17.500 9.200 V14.800 Z" fill="#e0e0e0"/><path d="M12 7 V10 M12 14 V17 M7 12 H10 M14 12 H17" stroke="#e0e0e0" stroke-width="1.400" stroke-dasharray="1.500 1"/></svg><svg style="left:12px;top:152px" width="24" height="24" viewBox="0 0 24 24" ><path d="M5.500 9 A7.500 7.500 0 0 1 18.500 9 M18.500 16 A7.500 7.500 0 0 1 5.500 16" fill="none" stroke="#e0e0e0" stroke-width="1.400"/><path d="M2.500 11 H8 L5.200 15 Z M16 14 H21.500 L18.800 10 Z" fill="#e0e0e0"/><path d="M12 8.800 L15.200 12 L12 15.200 L8.800 12 Z" fill="#d0d0d0"/></svg><svg style="left:12px;top:183px" width="24" height="24" viewBox="0 0 24 24" ><rect x="4" y="11.500" width="9" height="9" fill="#e6e6e6"/><path d="M4.500 8.500 V3.500 H20.500 V19.500 H15.500" fill="none" stroke="#cfcfcf" stroke-width="1.200"/><path d="M12.500 11.500 L18 6 M14 5.800 H18.200 V10" fill="none" stroke="#e6e6e6" stroke-width="1.300"/></svg><svg style="left:36.5px;top:205px" width="4" height="4" viewBox="0 0 4 4" ><path d="M4 0 V4 H0 Z" fill="#9a9a9a"/></svg><svg style="left:12px;top:214px" width="24" height="24" viewBox="0 0 24 24" ><circle cx="12" cy="12" r="8.500" fill="none" stroke="#d8d8d8" stroke-width="1.200" stroke-dasharray="3 1.500"/><rect x="8" y="8" width="8" height="8" fill="#e6e6e6"/><path d="M12 1.500 L14.200 4.500 H9.800 Z M12 22.500 L14.200 19.500 H9.800 Z M1.500 12 L4.500 9.800 V14.200 Z M22.500 12 L19.500 9.800 V14.200 Z" fill="#e6e6e6"/></svg><svg style="left:12px;top:250px" width="24" height="24" viewBox="0 0 24 24" ><path d="M2.200 15.800 L13.800 3.200 L16.800 6 L5.200 18.200 L1.500 19 Z" fill="#ececec"/><path d="M4.300 13.600 L7.300 16.300 M12.500 4.700 L15.500 7.400" stroke="#2a2a2a" stroke-width="0.700"/><path d="M1.500 19.500 C5.500 23 9 19.500 11.500 16.800 C14.500 13.500 18 14.500 20 17.500 C21 19 21.500 20 22 21" fill="none" stroke="#8fd6b6" stroke-width="1.100"/></svg><svg style="left:36.5px;top:271.5px" width="4" height="4" viewBox="0 0 4 4" ><path d="M4 0 V4 H0 Z" fill="#9a9a9a"/></svg><svg style="left:12px;top:280px" width="24" height="24" viewBox="0 0 24 24" ><path d="M7.500 19.500 V10.500 A9 9 0 0 1 16.500 19.500 Z" fill="#8fd6b6"/><path d="M7.500 8.800 A10.700 10.700 0 0 1 18.200 19.500" fill="none" stroke="#8fd6b6" stroke-width="1"/><path d="M3.800 2.500 H7.500 V19.500 H21 V22.500 H3.800 Z" fill="#e4e4e4"/><path d="M5 5 h2.500 M5 8 h2.500 M5 11 h2.500 M5 14 h2.500 M5 17 h2.500 M9.500 21 v1.500 M12 21 v1.500 M14.500 21 v1.500 M17 21 v1.500" stroke="#5a6a62" stroke-width="0.700"/></svg><svg style="left:12px;top:316px" width="24" height="24" viewBox="0 0 24 24" ><path d="M4.500 9.700 H17.500 V21 H4.500 Z M4.500 9.700 L8.500 5.200 H21.500 V16.500 L17.500 21 M17.500 9.700 L21.500 5.200" fill="none" stroke="#8fd6b6" stroke-width="1.100" stroke-linejoin="round"/><path d="M3.500 0.500 V7.500 M0 4 H7" stroke="#8fd6b6" stroke-width="1.500"/></svg><svg style="left:36.5px;top:338px" width="4" height="4" viewBox="0 0 4 4" ><path d="M4 0 V4 H0 Z" fill="#9a9a9a"/></svg><svg style="left:0;top:0" width="1584" height="974" viewBox="1 47 1584 974"><path d="M1541 141 V112" stroke="#3f86e8" stroke-width="2"/><path d="M1541 139 L1566 136.500" stroke="#83c41c" stroke-width="2"/><circle cx="1541" cy="129.500" r="6.200" fill="rgba(160,50,60,0.25)" stroke="#a8373f" stroke-width="1.200"/><circle cx="1512.500" cy="136" r="6.700" fill="#5d7d22" stroke="#86b42a" stroke-width="1.200"/><circle cx="1541" cy="163.800" r="6.700" fill="#315d94" stroke="#3f7fd0" stroke-width="1.200"/><circle cx="1541" cy="108.700" r="7.400" fill="#3585e6"/><circle cx="1569.400" cy="136.200" r="7.400" fill="#7db51f"/><circle cx="1540.800" cy="141.600" r="7.600" fill="#f23c55"/><g font-family="&quot;DejaVu Sans&quot;,&quot;Liberation Sans&quot;,sans-serif" font-weight="bold" font-size="10.500" text-anchor="middle" style="letter-spacing:0"><text x="1541" y="112.500" fill="#0c2a55">Z</text><text x="1569.400" y="140" fill="#24400a">Y</text><text x="1540.800" y="145.400" fill="#5a0a14">X</text></g><circle cx="1565" cy="184.8" r="11.800" fill="rgba(36,36,36,0.88)"/><circle cx="1565" cy="211.8" r="11.800" fill="rgba(36,36,36,0.88)"/><circle cx="1565" cy="238.4" r="11.800" fill="rgba(36,36,36,0.88)"/><circle cx="1565" cy="265.7" r="11.800" fill="rgba(36,36,36,0.88)"/><g transform="translate(1557 176.800)"><circle cx="9.300" cy="6.300" r="5" fill="#e9e9e9"/><path d="M5.800 10 L1.600 14.200" stroke="#e9e9e9" stroke-width="2.200" stroke-linecap="round"/><path d="M9.300 3.800 V8.800 M6.800 6.300 H11.800" stroke="#333" stroke-width="1"/></g><g transform="translate(1557 203.800)" fill="#e9e9e9"><path d="M4.500 15 C2.800 12.500 1.600 10.500 1 8.800 C0.700 7.800 2 7.300 2.700 8.300 L4.200 10.300 V3.200 C4.200 2.200 5.700 2.200 5.700 3.200 V7.200 H6.400 V1.700 C6.400 0.700 8 0.700 8 1.700 V7.200 H8.700 V2.300 C8.700 1.300 10.300 1.300 10.300 2.300 V7.500 H11 V4 C11 3 12.500 3 12.500 4 V10.500 C12.500 12.500 12 14 11.300 15 Z"/></g><g transform="translate(1557 230.400)" fill="#e9e9e9"><circle cx="4.500" cy="4.200" r="3"/><circle cx="10.300" cy="4.200" r="3"/><rect x="2.200" y="7.600" width="9.500" height="6.400" rx="1"/><path d="M12.200 10 L15.400 8.200 V13.400 L12.200 11.600 Z"/><circle cx="4.500" cy="4.200" r="1" fill="#333"/><circle cx="10.300" cy="4.200" r="1" fill="#333"/></g><g transform="translate(1557 257.700)" fill="none" stroke="#e9e9e9" stroke-width="1.300"><path d="M4 2.200 H12 L15 14 H1 Z"/><path d="M6.700 2.200 L5.700 14 M9.300 2.200 L10.300 14 M3.200 5.800 H12.800 M2.200 9.600 H13.800"/></g></svg><svg style="left:804px;top:486px" width="26" height="26" viewBox="0 0 26 26" ><circle cx="13" cy="13" r="5.600" fill="none" stroke="#f0f0f0" stroke-width="1.200" stroke-dasharray="2.200 2.200"/><circle cx="13" cy="13" r="5.600" fill="none" stroke="#e0524e" stroke-width="1.200" stroke-dasharray="2.200 2.200" stroke-dashoffset="2.200"/><path d="M13 0.500 V8 M13 18 V25.500 M0.500 13 H8 M18 13 H25.500" stroke="#101010" stroke-width="1"/><circle cx="13.500" cy="15.500" r="1.700" fill="#3b6fc4"/></svg></div>
<div id="outl"><div class="abs" style="left:0px;top:41px;width:331px;height:18px;background:#2b2b2b;border-radius:0;"></div><div class="abs" style="left:0px;top:77px;width:331px;height:18px;background:#2b2b2b;border-radius:0;"></div><div class="abs" style="left:0px;top:113px;width:331px;height:18px;background:#2b2b2b;border-radius:0;"></div><div class="abs" style="left:0px;top:149px;width:331px;height:18px;background:#2b2b2b;border-radius:0;"></div><div class="abs" style="left:0px;top:185px;width:331px;height:18px;background:#2b2b2b;border-radius:0;"></div><div class="abs" style="left:0px;top:221px;width:331px;height:18px;background:#2b2b2b;border-radius:0;"></div><div class="abs" style="left:0px;top:257px;width:331px;height:18px;background:#2b2b2b;border-radius:0;"></div><div class="abs" style="left:0px;top:293px;width:331px;height:18px;background:#2b2b2b;border-radius:0;"></div><div class="abs" style="left:0px;top:59px;width:331px;height:18px;background:#334f80;border-radius:0;"></div><div class="abs" style="left:7.5px;top:2.5px;width:27px;height:17px;background:#232323;border-radius:4px;border:1px solid #3c3c3c;"></div><div class="abs" style="left:39.5px;top:2.5px;width:27px;height:17px;background:#232323;border-radius:4px;border:1px solid #3c3c3c;"></div><div class="abs" style="left:106px;top:2.5px;width:99px;height:17px;background:#1d1d1d;border-radius:4px;border:1px solid #3c3c3c;"></div><div class="abs" style="left:275.5px;top:2.5px;width:27px;height:17px;background:#232323;border-radius:4px;border:1px solid #3c3c3c;"></div><div class="abs" style="left:308px;top:2.5px;width:16.5px;height:17px;background:#555555;border-radius:4px;"></div><svg style="left:10px;top:4px" width="14" height="14" viewBox="0 0 16 16" ><rect x="1" y="1.500" width="5" height="3" fill="#e0e0e0"/><rect x="7.500" y="6.500" width="6.500" height="3" fill="#e0e0e0"/><rect x="7.500" y="11.500" width="6.500" height="3" fill="#e0e0e0"/><path d="M3 4.500 V13 H7.500 M3 8 H7.500" fill="none" stroke="#e0e0e0" stroke-width="1"/></svg><svg style="left:25.5px;top:9.5px" width="7" height="4.6" viewBox="0 0 7 4.6"><path d="M0.6 0.6 L3.5 3.6 L6.4 0.6" fill="none" stroke="#d4d4d4" stroke-width="1.15" stroke-linecap="round" stroke-linejoin="round"/></svg><svg style="left:42px;top:4px" width="14" height="14" viewBox="0 0 16 16" ><path d="M1.5 5 V14.5 H11" fill="none" stroke="#d8d8d8" stroke-width="1.1"/><path d="M3.5 3.5 V12.5 H13" fill="none" stroke="#d8d8d8" stroke-width="1.1"/><rect x="5.5" y="1.5" width="9.5" height="9" fill="none" stroke="#d8d8d8" stroke-width="1.3"/><path d="M6.5 9.5 L9.2 6 L11 8 L12 7 L14 9.5 Z" fill="#d8d8d8"/><circle cx="12.4" cy="4.2" r="1" fill="#d8d8d8"/></svg><svg style="left:57.5px;top:9.5px" width="7" height="4.6" viewBox="0 0 7 4.6"><path d="M0.6 0.6 L3.5 3.6 L6.4 0.6" fill="none" stroke="#d4d4d4" stroke-width="1.15" stroke-linecap="round" stroke-linejoin="round"/></svg><svg style="left:109.5px;top:4px" width="14" height="14" viewBox="0 0 16 16" ><circle cx="9.500" cy="6" r="4.200" fill="none" stroke="#d0d0d0" stroke-width="1.300"/><path d="M6.500 9 L1.500 14" stroke="#d0d0d0" stroke-width="1.500" stroke-linecap="round"/></svg><svg style="left:278px;top:4px" width="14" height="14" viewBox="0 0 16 16" ><path d="M1.500 2 H14.500 L9.500 8.500 V14.500 L6.500 12.500 V8.500 Z" fill="none" stroke="#e0e0e0" stroke-width="1.300" stroke-linejoin="round"/></svg><svg style="left:293.5px;top:9.5px" width="7" height="4.6" viewBox="0 0 7 4.6"><path d="M0.6 0.6 L3.5 3.6 L6.4 0.6" fill="none" stroke="#d4d4d4" stroke-width="1.15" stroke-linecap="round" stroke-linejoin="round"/></svg><svg style="left:309.5px;top:4px" width="14" height="14" viewBox="0 0 16 16" ><path d="M2 3.500 H8 M2 3.500 V14 H12 V8" fill="none" stroke="#9a9a9a" stroke-width="1.200"/><rect x="4.500" y="8.500" width="5" height="3" fill="#9a9a9a"/><circle cx="11.800" cy="3.800" r="3" fill="#cfcfcf"/><path d="M11.800 2.300 V5.300 M10.300 3.800 H13.300" stroke="#555" stroke-width="0.900"/></svg><svg style="left:20.5px;top:27px" width="13" height="12" viewBox="0 0 13 12" ><rect x="0.500" y="0.500" width="12" height="3.500" fill="#e6e6e6"/><rect x="1.300" y="4.800" width="10.400" height="6.700" fill="#e6e6e6"/><rect x="4.200" y="6" width="4.600" height="1.800" fill="#282828"/></svg><div class="t" style="left:39.5px;top:26px;color:#dadada;">Коллекция сцены</div><svg style="left:23.5px;top:47px" width="6.5" height="6" viewBox="0 0 6.500 6" ><path d="M0 0 H6.500 L3.250 6 Z" fill="#c8c8c8"/></svg><div class="abs" style="left:36.5px;top:42.5px;width:17.5px;height:15.5px;background:#3f3f3f;border-radius:4px;border:1px solid #6a6a6a;"></div><svg style="left:39px;top:44.5px" width="13" height="12" viewBox="0 0 13 12" ><rect x="0.500" y="0.500" width="12" height="3.500" fill="#e6e6e6"/><rect x="1.300" y="4.800" width="10.400" height="6.700" fill="#e6e6e6"/><rect x="4.200" y="6" width="4.600" height="1.800" fill="#3f3f3f"/></svg><div class="t" style="left:57.5px;top:44px;color:#dadada;">Collection</div><svg style="left:273.5px;top:46px" width="9" height="9" viewBox="0 0 9 9" ><rect x="0" y="0" width="9" height="9" rx="1" fill="#e6e6e6"/><path d="M1.800 4.600 L3.800 6.600 L7.400 2.600" fill="none" stroke="#282828" stroke-width="1.500"/></svg><svg style="left:289.5px;top:45.7px" width="11.5" height="8" viewBox="0 0 11.500 8" ><path d="M0.300 4 C2.500 0.300 9 0.300 11.200 4 C9 7.700 2.500 7.700 0.300 4 Z" fill="#e6e6e6"/><circle cx="5.750" cy="4" r="2.600" fill="#2b2b2b"/><circle cx="5.750" cy="4" r="1.200" fill="#e6e6e6"/></svg><svg style="left:307.5px;top:45px" width="11.5" height="10" viewBox="0 0 11.500 10" ><path d="M0.300 2.200 H3 L3.800 0.500 H7.700 L8.500 2.200 H11.200 V9.700 H0.300 Z" fill="#e6e6e6"/><circle cx="5.750" cy="5.700" r="2.900" fill="#2b2b2b"/><circle cx="5.750" cy="5.700" r="1.700" fill="none" stroke="#e6e6e6" stroke-width="1"/></svg><div class="abs" style="left:26px;top:60px;width:1px;height:16px;background:#555f75;border-radius:0;"></div><svg style="left:42px;top:65px" width="5.5" height="6" viewBox="0 0 5.500 6" ><path d="M0 0 L5.500 3 L0 6 Z" fill="#c8d4ee"/></svg><div class="abs" style="left:54.5px;top:60.5px;width:17.5px;height:15.5px;background:#5e6d8a;border-radius:4px;border:1px solid #7f8ba3;"></div><svg style="left:57.5px;top:63px" width="11.5" height="11" viewBox="0 0 11.500 11" ><path d="M0.800 0.800 H10.700 L5.750 10 Z" fill="none" stroke="#e8a071" stroke-width="2" stroke-linejoin="round"/></svg><div class="t" style="left:75.5px;top:62px;color:#f0c878;">Red Circle With Slash</div><svg style="left:192.5px;top:62px" width="13" height="13" viewBox="0 0 13 13" ><path d="M2 2.200 H11 L6.500 10.500 Z" fill="#1f7f98" stroke="#33aec9" stroke-width="1.100" stroke-linejoin="round"/><circle cx="2" cy="2.200" r="1.400" fill="#2a4f80" stroke="#33aec9" stroke-width="0.900"/><circle cx="11" cy="2.200" r="1.400" fill="#2a4f80" stroke="#33aec9" stroke-width="0.900"/><circle cx="6.500" cy="10.800" r="1.400" fill="#2a4f80" stroke="#33aec9" stroke-width="0.900"/></svg><svg style="left:289.5px;top:63.8px" width="11.5" height="8" viewBox="0 0 11.500 8" ><path d="M0.300 4 C2.500 0.300 9 0.300 11.200 4 C9 7.700 2.500 7.700 0.300 4 Z" fill="#dfe8fb"/><circle cx="5.750" cy="4" r="2.600" fill="#334f80"/><circle cx="5.750" cy="4" r="1.200" fill="#dfe8fb"/></svg><svg style="left:307.5px;top:63px" width="11.5" height="10" viewBox="0 0 11.500 10" ><path d="M0.300 2.200 H3 L3.800 0.500 H7.700 L8.500 2.200 H11.200 V9.700 H0.300 Z" fill="#dfe8fb"/><circle cx="5.750" cy="5.700" r="2.900" fill="#334f80"/><circle cx="5.750" cy="5.700" r="1.700" fill="none" stroke="#dfe8fb" stroke-width="1"/></svg></div>
<div id="props"><div class="abs" style="left:0px;top:23px;width:24px;height:640px;background:#1e1e1e;border-radius:0;"></div><div class="abs" style="left:0px;top:377px;width:24px;height:24px;background:#303030;border-radius:4px 0 0 4px;"></div><div class="abs" style="left:8px;top:4.5px;width:26px;height:15.5px;background:#242424;border-radius:4px;border:1px solid #3a3a3a;"></div><svg style="left:10.5px;top:5.5px" width="13" height="13" viewBox="0 0 13 15" ><rect x="1" y="2" width="11" height="4.500" rx="2.250" fill="#e6e6e6"/><rect x="1" y="8.500" width="11" height="4.500" rx="2.250" fill="#e6e6e6"/><rect x="5" y="3.200" width="5.500" height="2.100" rx="1" fill="#242424"/><rect x="2.500" y="9.700" width="5.500" height="2.100" rx="1" fill="#242424"/></svg><svg style="left:25px;top:11px" width="7" height="4.6" viewBox="0 0 7 4.6"><path d="M0.6 0.6 L3.5 3.6 L6.4 0.6" fill="none" stroke="#d4d4d4" stroke-width="1.15" stroke-linecap="round" stroke-linejoin="round"/></svg><div class="abs" style="left:117px;top:4.5px;width:99px;height:16px;background:#1d1d1d;border-radius:4px;border:1px solid #3a3a3a;"></div><svg style="left:120.5px;top:6px" width="14" height="14" viewBox="0 0 16 16" ><circle cx="9.500" cy="6" r="4.200" fill="none" stroke="#d0d0d0" stroke-width="1.300"/><path d="M6.500 9 L1.500 14" stroke="#d0d0d0" stroke-width="1.500" stroke-linecap="round"/></svg><div class="abs" style="left:308px;top:4px;width:16px;height:16px;background:#242424;border-radius:4px;border:1px solid #3a3a3a;"></div><svg style="left:312.5px;top:10.5px" width="7" height="4.6" viewBox="0 0 7 4.6"><path d="M0.6 0.6 L3.5 3.6 L6.4 0.6" fill="none" stroke="#d4d4d4" stroke-width="1.15" stroke-linecap="round" stroke-linejoin="round"/></svg><div class="abs" style="left:326.5px;top:32px;width:3px;height:377px;background:#4a4a4a;border-radius:2px;"></div><svg style="left:33px;top:32.5px" width="13.5" height="13.5" viewBox="0 0 16 16" ><path d="M1.500 5 V1.500 H5 M11 1.500 H14.500 V5 M14.500 11 V14.500 H11 M5 14.500 H1.500 V11" fill="none" stroke="#dcdcdc" stroke-width="1.300"/><rect x="4" y="4" width="8" height="8" fill="#e8e8e8"/></svg><div class="t" style="left:54.5px;top:32px;color:#e0e0e0;">Red Circle With Slash</div><svg style="left:161px;top:35px" width="6" height="9" viewBox="0 0 6 9" ><path d="M1 0.800 L5 4.500 L1 8.200" fill="none" stroke="#a0a0a0" stroke-width="1.300"/></svg><svg style="left:174.5px;top:32.5px" width="12.5" height="12.5" viewBox="0 0 16 16" ><circle cx="8" cy="8" r="7" fill="#e8e8e8"/><path d="M8 8 V1 A7 7 0 0 1 15 8 Z" fill="#303030"/><path d="M8 8 V15 A7 7 0 0 1 1 8 Z" fill="#303030"/><circle cx="8" cy="8" r="7" fill="none" stroke="#e8e8e8" stroke-width="1.400"/></svg><div class="t" style="left:195.5px;top:32px;color:#e0e0e0;">Red Circle With Slash</div><svg style="left:309.5px;top:32px" width="13" height="13" viewBox="0 0 16 16" ><path d="M9.500 1.500 L14.500 6.500 L12.800 7 L10.300 9.500 L10 12.500 L7 9.600 L2 14 L6.400 9 L3.500 6 L6.500 5.700 L9 3.200 Z" fill="none" stroke="#8a8a8a" stroke-width="1.200" stroke-linejoin="round"/></svg><div class="abs" style="left:32px;top:62.5px;width:268px;height:69px;background:#232323;border-radius:4px;border:1px solid #2c2c2c;"></div><div class="abs" style="left:36.5px;top:67px;width:259px;height:16.5px;background:#47474a;border-radius:4px;"></div><svg style="left:38.5px;top:68.5px" width="11" height="13" viewBox="0 0 11 13" ><ellipse cx="5.500" cy="6.500" rx="5" ry="6" fill="#e2e2e2"/><ellipse cx="4.500" cy="5.500" rx="3" ry="4" fill="#f4f4f4"/></svg><div class="t" style="left:58.5px;top:68px;color:#ffffff;">Red Circle With Slash</div><svg style="left:41.5px;top:121.5px" width="5.5" height="6" viewBox="0 0 5.500 6" ><path d="M0 0 L5.500 3 L0 6 Z" fill="#b8b8b8"/></svg><svg style="left:169px;top:122.5px" width="9" height="4" viewBox="0 0 9 4" ><g fill="#6e6e6e"><rect x="0" y="0" width="1.200" height="1.200"/><rect x="2.500" y="0" width="1.200" height="1.200"/><rect x="5" y="0" width="1.200" height="1.200"/><rect x="7.500" y="0" width="1.200" height="1.200"/><rect x="0" y="2.500" width="1.200" height="1.200"/><rect x="2.500" y="2.500" width="1.200" height="1.200"/><rect x="5" y="2.500" width="1.200" height="1.200"/><rect x="7.500" y="2.500" width="1.200" height="1.200"/></g></svg><div class="abs" style="left:308px;top:63px;width:16px;height:16.5px;background:#555555;border-radius:4px 4px 0 0;"></div><div class="abs" style="left:308px;top:80px;width:16px;height:17px;background:#555555;border-radius:0 0 4px 4px;"></div><svg style="left:311.5px;top:66.5px" width="9" height="9" viewBox="0 0 9 9" ><path d="M4.500 0.500 V8.500 M0.500 4.500 H8.500" stroke="#e6e6e6" stroke-width="1.100"/></svg><svg style="left:311.5px;top:84px" width="9" height="9" viewBox="0 0 9 9" ><path d="M0.500 4.500 H8.500" stroke="#9a9a9a" stroke-width="1.100"/></svg><div class="abs" style="left:308px;top:104px;width:16px;height:16.5px;background:#242424;border-radius:4px;border:1px solid #3a3a3a;"></div><svg style="left:312.5px;top:110.5px" width="7" height="4.6" viewBox="0 0 7 4.6"><path d="M0.6 0.6 L3.5 3.6 L6.4 0.6" fill="none" stroke="#d4d4d4" stroke-width="1.15" stroke-linecap="round" stroke-linejoin="round"/></svg><div class="abs" style="left:32px;top:138px;width:26.5px;height:16px;background:#282828;border-radius:4px 0 0 4px;border:1px solid #3d3d3d;"></div><svg style="left:35.5px;top:140px" width="12" height="12" viewBox="0 0 16 16" ><circle cx="8" cy="8" r="7" fill="#e8e8e8"/><path d="M8 8 V1 A7 7 0 0 1 15 8 Z" fill="#282828"/><path d="M8 8 V15 A7 7 0 0 1 1 8 Z" fill="#282828"/><circle cx="8" cy="8" r="7" fill="none" stroke="#e8e8e8" stroke-width="1.400"/></svg><svg style="left:49.5px;top:144.5px" width="7" height="4.6" viewBox="0 0 7 4.6"><path d="M0.6 0.6 L3.5 3.6 L6.4 0.6" fill="none" stroke="#d4d4d4" stroke-width="1.15" stroke-linecap="round" stroke-linejoin="round"/></svg><div class="abs" style="left:58.5px;top:138px;width:177.5px;height:16px;background:#1d1d1d;border-radius:0;border:1px solid #3d3d3d;border-left:none;"></div><div class="t" style="left:65.5px;top:139px;color:#e6e6e6;">Red Circle With Slash</div><div class="abs" style="left:236px;top:138px;width:18px;height:16px;background:#4f4f4f;border-radius:0;"></div><div class="abs" style="left:254.5px;top:138px;width:17.5px;height:16px;background:#555555;border-radius:0;"></div><div class="abs" style="left:272.5px;top:138px;width:17px;height:16px;background:#555555;border-radius:0 4px 4px 0;"></div><svg style="left:239px;top:140px" width="12" height="12" viewBox="0 0 16 16" ><path d="M8 1.500 C10 3 12.500 3.200 14 3.200 C14 9 12 12.500 8 14.500 C4 12.500 2 9 2 3.200 C3.500 3.200 6 3 8 1.500 Z" fill="none" stroke="#8c8c8c" stroke-width="1.400"/></svg><svg style="left:256.5px;top:139.5px" width="13" height="13" viewBox="0 0 16 16" ><path d="M5.500 3.500 V1.500 H11 L14 4.500 V11.500 H10.500" fill="none" stroke="#e0e0e0" stroke-width="1.300"/><path d="M2 4.500 H10 V14.500 H2 Z" fill="none" stroke="#e0e0e0" stroke-width="1.300"/></svg><svg style="left:276.5px;top:141.5px" width="9" height="9" viewBox="0 0 9 9" ><path d="M1 1 L8 8 M8 1 L1 8" stroke="#e0e0e0" stroke-width="1.200" stroke-linecap="round"/></svg><div class="abs" style="left:298.5px;top:138px;width:25.5px;height:16px;background:#282828;border-radius:4px;border:1px solid #3d3d3d;"></div><svg style="left:301.5px;top:139.5px" width="13" height="13" viewBox="0 0 13 13" ><path d="M2.500 2.500 H10.500 L6.500 10.500 Z" fill="none" stroke="#e6e6e6" stroke-width="1.200"/><circle cx="2.500" cy="2.500" r="1.500" fill="#282828" stroke="#e6e6e6" stroke-width="1"/><circle cx="10.500" cy="2.500" r="1.500" fill="#282828" stroke="#e6e6e6" stroke-width="1"/><circle cx="6.500" cy="10.800" r="1.500" fill="#282828" stroke="#e6e6e6" stroke-width="1"/></svg><svg style="left:315.5px;top:144.5px" width="7" height="4.6" viewBox="0 0 7 4.6"><path d="M0.6 0.6 L3.5 3.6 L6.4 0.6" fill="none" stroke="#d4d4d4" stroke-width="1.15" stroke-linecap="round" stroke-linejoin="round"/></svg><div class="abs" style="left:31.5px;top:163px;width:292.5px;height:22px;background:#3d3d3d;border-radius:4px;"></div><div class="abs" style="left:31.5px;top:187px;width:292.5px;height:480px;background:#3d3d3d;border-radius:4px;"></div><svg style="left:39.5px;top:171px" width="5.5" height="9" viewBox="0 0 5.500 9" ><path d="M1 0.800 L4.700 4.500 L1 8.200" fill="none" stroke="#a8a8a8" stroke-width="1.300"/></svg><div class="t" style="left:50px;top:168px;color:#e6e6e6;">Предпросмотр</div><svg style="left:37.5px;top:194.5px" width="9" height="6" viewBox="0 0 9 6" ><path d="M0.800 1 L4.500 4.800 L8.200 1" fill="none" stroke="#a8a8a8" stroke-width="1.300"/></svg><div class="t" style="left:50px;top:191px;color:#e6e6e6;">Поверхность</div><svg style="left:308px;top:171px" width="10" height="4" viewBox="0 0 10 4" ><g fill="#7a7a7a"><rect x="0.0" y="0.0" width="1.200" height="1.200"/><rect x="0.0" y="2.7" width="1.200" height="1.200"/><rect x="2.7" y="0.0" width="1.200" height="1.200"/><rect x="2.7" y="2.7" width="1.200" height="1.200"/><rect x="5.4" y="0.0" width="1.200" height="1.200"/><rect x="5.4" y="2.7" width="1.200" height="1.200"/><rect x="8.100000000000001" y="0.0" width="1.200" height="1.200"/><rect x="8.100000000000001" y="2.7" width="1.200" height="1.200"/></g></svg><svg style="left:308px;top:194px" width="10" height="4" viewBox="0 0 10 4" ><g fill="#7a7a7a"><rect x="0.0" y="0.0" width="1.200" height="1.200"/><rect x="0.0" y="2.7" width="1.200" height="1.200"/><rect x="2.7" y="0.0" width="1.200" height="1.200"/><rect x="2.7" y="2.7" width="1.200" height="1.200"/><rect x="5.4" y="0.0" width="1.200" height="1.200"/><rect x="5.4" y="2.7" width="1.200" height="1.200"/><rect x="8.100000000000001" y="0.0" width="1.200" height="1.200"/><rect x="8.100000000000001" y="2.7" width="1.200" height="1.200"/></g></svg><div class="t" style="right:192.5px;top:218px;color:#dcdcdc;text-align:right">Поверхность</div><div class="abs" style="left:147px;top:216px;width:151px;height:16px;background:#282828;border-radius:4px;"></div><svg style="left:151px;top:220px" width="8" height="8" viewBox="0 0 8 8" ><circle cx="4" cy="4" r="3" fill="#63c763" stroke="#173b17" stroke-width="1"/></svg><div class="t" style="left:166px;top:218px;color:#e6e6e6;">Принципиальный BSDF</div><div class="abs" style="left:147px;top:247px;width:151px;height:16px;background:#282828;border-radius:4px;border:1px solid #3d3d3d;"></div><div class="t" style="left:153px;top:249px;color:#e6e6e6;">GGX</div><svg style="left:288px;top:253.5px" width="7" height="4.6" viewBox="0 0 7 4.6"><path d="M0.6 0.6 L3.5 3.6 L6.4 0.6" fill="none" stroke="#d4d4d4" stroke-width="1.15" stroke-linecap="round" stroke-linejoin="round"/></svg><svg style="left:305.5px;top:253px" width="4" height="4" viewBox="0 0 4 4" ><circle cx="2" cy="2" r="1.600" fill="#d8d8d8"/></svg><div class="abs" style="left:147px;top:269px;width:151px;height:16px;background:#282828;border-radius:4px;border:1px solid #3d3d3d;"></div><div class="t" style="left:153px;top:271px;color:#e6e6e6;">Случайный обход</div><svg style="left:288px;top:275.5px" width="7" height="4.6" viewBox="0 0 7 4.6"><path d="M0.6 0.6 L3.5 3.6 L6.4 0.6" fill="none" stroke="#d4d4d4" stroke-width="1.15" stroke-linecap="round" stroke-linejoin="round"/></svg><svg style="left:305.5px;top:275px" width="4" height="4" viewBox="0 0 4 4" ><circle cx="2" cy="2" r="1.600" fill="#d8d8d8"/></svg><div class="t" style="right:192.5px;top:293px;color:#dcdcdc;text-align:right">Основной цвет</div><div class="abs" style="left:147px;top:291px;width:16.5px;height:16px;background:#2a2a2a;border-radius:4px 0 0 4px;"></div><svg style="left:151px;top:295px" width="8" height="8" viewBox="0 0 8 8" ><circle cx="4" cy="4" r="3.200" fill="#c9c96a" stroke="#1a1a1a" stroke-width="0.800"/></svg><div class="abs" style="left:163.5px;top:291px;width:134.5px;height:16px;background:#e7e7e7;border-radius:0 4px 4px 0;"></div><svg style="left:305.5px;top:297px" width="4" height="4" viewBox="0 0 4 4" ><circle cx="2" cy="2" r="1.600" fill="#d8d8d8"/></svg><div class="t" style="right:192.5px;top:315px;color:#dcdcdc;text-align:right">Подпов. рассеива...</div><div class="abs" style="left:147px;top:313px;width:16.5px;height:16px;background:#2a2a2a;border-radius:4px 0 0 4px;"></div><svg style="left:151px;top:317px" width="8" height="8" viewBox="0 0 8 8" ><circle cx="4" cy="4" r="3.200" fill="#a1a1a1" stroke="#1a1a1a" stroke-width="0.800"/></svg><div class="abs" style="left:163.5px;top:313px;width:134.5px;height:16px;background:#545454;border-radius:0 4px 4px 0;"></div><div class="t" style="left:180.5px;width:100px;top:315px;color:#e6e6e6;text-align:center">0.000</div><svg style="left:305.5px;top:319px" width="4" height="4" viewBox="0 0 4 4" ><circle cx="2" cy="2" r="1.600" fill="#d8d8d8"/></svg><div class="t" style="right:192.5px;top:336px;color:#dcdcdc;text-align:right">Радиус п...сеивания</div><div class="abs" style="left:147px;top:334px;width:16.5px;height:16px;background:#2c2c2c;border-radius:4px;"></div><svg style="left:151px;top:338px" width="8" height="8" viewBox="0 0 8 8" ><circle cx="4" cy="4" r="3.200" fill="#6363c7" stroke="#1a1a1a" stroke-width="0.800"/></svg><div class="abs" style="left:169.5px;top:334px;width:128.5px;height:16.5px;background:#545454;border-radius:4px 4px 0 0;"></div><div class="t" style="left:183.5px;width:100px;top:336px;color:#e6e6e6;text-align:center">1.000</div><svg style="left:305.5px;top:340px" width="4" height="4" viewBox="0 0 4 4" ><circle cx="2" cy="2" r="1.600" fill="#d8d8d8"/></svg><div class="abs" style="left:169.5px;top:352px;width:128.5px;height:16.5px;background:#545454;border-radius:0;"></div><div class="t" style="left:183.5px;width:100px;top:354px;color:#e6e6e6;text-align:center">0.200</div><svg style="left:305.5px;top:358px" width="4" height="4" viewBox="0 0 4 4" ><circle cx="2" cy="2" r="1.600" fill="#d8d8d8"/></svg><div class="abs" style="left:169.5px;top:370px;width:128.5px;height:16px;background:#545454;border-radius:0 0 4px 4px;"></div><div class="t" style="left:183.5px;width:100px;top:372px;color:#e6e6e6;text-align:center">0.100</div><svg style="left:305.5px;top:376px" width="4" height="4" viewBox="0 0 4 4" ><circle cx="2" cy="2" r="1.600" fill="#d8d8d8"/></svg><div class="abs" style="left:169.5px;top:350.5px;width:128.5px;height:1.5px;background:#3a3a3a;border-radius:0;"></div><div class="abs" style="left:169.5px;top:368.5px;width:128.5px;height:1.5px;background:#3a3a3a;border-radius:0;"></div><div class="t" style="right:192.5px;top:394px;color:#dcdcdc;text-align:right">Подпов. цвет</div><div class="abs" style="left:147px;top:392px;width:16.5px;height:16px;background:#2a2a2a;border-radius:4px 0 0 4px;"></div><svg style="left:151px;top:396px" width="8" height="8" viewBox="0 0 8 8" ><circle cx="4" cy="4" r="3.200" fill="#c9c96a" stroke="#1a1a1a" stroke-width="0.800"/></svg><div class="abs" style="left:163.5px;top:392px;width:134.5px;height:16px;background:#e7e7e7;border-radius:0 4px 4px 0;"></div><svg style="left:305.5px;top:398px" width="4" height="4" viewBox="0 0 4 4" ><circle cx="2" cy="2" r="1.600" fill="#d8d8d8"/></svg><div class="t" style="right:192.5px;top:416px;color:#dcdcdc;text-align:right">Subsurface IOR</div><div class="abs" style="left:147px;top:414px;width:16.5px;height:16px;background:#2a2a2a;border-radius:4px 0 0 4px;"></div><svg style="left:151px;top:418px" width="8" height="8" viewBox="0 0 8 8" ><circle cx="4" cy="4" r="3.200" fill="#a1a1a1" stroke="#1a1a1a" stroke-width="0.800"/></svg><div class="abs" style="left:163.5px;top:414px;width:134.5px;height:16px;background:linear-gradient(90deg,#4772b3 0,#4772b3 13.8%,#545454 13.8%);border-radius:0 4px 4px 0;"></div><div class="t" style="left:180.5px;width:100px;top:416px;color:#e6e6e6;text-align:center">1.400</div><svg style="left:305.5px;top:420px" width="4" height="4" viewBox="0 0 4 4" ><circle cx="2" cy="2" r="1.600" fill="#d8d8d8"/></svg><div class="t" style="right:192.5px;top:438px;color:#dcdcdc;text-align:right">Subsurface Anisotr...</div><div class="abs" style="left:147px;top:436px;width:16.5px;height:16px;background:#2a2a2a;border-radius:4px 0 0 4px;"></div><svg style="left:151px;top:440px" width="8" height="8" viewBox="0 0 8 8" ><circle cx="4" cy="4" r="3.200" fill="#a1a1a1" stroke="#1a1a1a" stroke-width="0.800"/></svg><div class="abs" style="left:163.5px;top:436px;width:134.5px;height:16px;background:#545454;border-radius:0 4px 4px 0;"></div><div class="t" style="left:180.5px;width:100px;top:438px;color:#e6e6e6;text-align:center">0.000</div><svg style="left:305.5px;top:442px" width="4" height="4" viewBox="0 0 4 4" ><circle cx="2" cy="2" r="1.600" fill="#d8d8d8"/></svg><div class="t" style="right:192.5px;top:460px;color:#dcdcdc;text-align:right">Металличность</div><div class="abs" style="left:147px;top:458px;width:16.5px;height:16px;background:#2a2a2a;border-radius:4px 0 0 4px;"></div><svg style="left:151px;top:462px" width="8" height="8" viewBox="0 0 8 8" ><circle cx="4" cy="4" r="3.200" fill="#a1a1a1" stroke="#1a1a1a" stroke-width="0.800"/></svg><div class="abs" style="left:163.5px;top:458px;width:134.5px;height:16px;background:#545454;border-radius:0 4px 4px 0;"></div><div class="t" style="left:180.5px;width:100px;top:460px;color:#e6e6e6;text-align:center">0.000</div><svg style="left:305.5px;top:464px" width="4" height="4" viewBox="0 0 4 4" ><circle cx="2" cy="2" r="1.600" fill="#d8d8d8"/></svg><div class="t" style="right:192.5px;top:482px;color:#dcdcdc;text-align:right">Блик</div><div class="abs" style="left:147px;top:480px;width:16.5px;height:16px;background:#2a2a2a;border-radius:4px 0 0 4px;"></div><svg style="left:151px;top:484px" width="8" height="8" viewBox="0 0 8 8" ><circle cx="4" cy="4" r="3.200" fill="#a1a1a1" stroke="#1a1a1a" stroke-width="0.800"/></svg><div class="abs" style="left:163.5px;top:480px;width:134.5px;height:16px;background:linear-gradient(90deg,#4772b3 0,#4772b3 50.0%,#545454 50.0%);border-radius:0 4px 4px 0;"></div><div class="t" style="left:180.5px;width:100px;top:482px;color:#e6e6e6;text-align:center">0.500</div><svg style="left:305.5px;top:486px" width="4" height="4" viewBox="0 0 4 4" ><circle cx="2" cy="2" r="1.600" fill="#d8d8d8"/></svg><div class="t" style="right:192.5px;top:504px;color:#dcdcdc;text-align:right">Цветной блик</div><div class="abs" style="left:147px;top:502px;width:16.5px;height:16px;background:#2a2a2a;border-radius:4px 0 0 4px;"></div><svg style="left:151px;top:506px" width="8" height="8" viewBox="0 0 8 8" ><circle cx="4" cy="4" r="3.200" fill="#a1a1a1" stroke="#1a1a1a" stroke-width="0.800"/></svg><div class="abs" style="left:163.5px;top:502px;width:134.5px;height:16px;background:#545454;border-radius:0 4px 4px 0;"></div><div class="t" style="left:180.5px;width:100px;top:504px;color:#e6e6e6;text-align:center">0.000</div><svg style="left:305.5px;top:508px" width="4" height="4" viewBox="0 0 4 4" ><circle cx="2" cy="2" r="1.600" fill="#d8d8d8"/></svg><div class="t" style="right:192.5px;top:526px;color:#dcdcdc;text-align:right">Шероховатость</div><div class="abs" style="left:147px;top:524px;width:16.5px;height:16px;background:#2a2a2a;border-radius:4px 0 0 4px;"></div><svg style="left:151px;top:528px" width="8" height="8" viewBox="0 0 8 8" ><circle cx="4" cy="4" r="3.200" fill="#a1a1a1" stroke="#1a1a1a" stroke-width="0.800"/></svg><div class="abs" style="left:163.5px;top:524px;width:134.5px;height:16px;background:linear-gradient(90deg,#4772b3 0,#4772b3 50.0%,#545454 50.0%);border-radius:0 4px 4px 0;"></div><div class="t" style="left:180.5px;width:100px;top:526px;color:#e6e6e6;text-align:center">0.500</div><svg style="left:305.5px;top:530px" width="4" height="4" viewBox="0 0 4 4" ><circle cx="2" cy="2" r="1.600" fill="#d8d8d8"/></svg><div class="t" style="right:192.5px;top:548px;color:#dcdcdc;text-align:right">Анизотропность</div><div class="abs" style="left:147px;top:546px;width:16.5px;height:16px;background:#2a2a2a;border-radius:4px 0 0 4px;"></div><svg style="left:151px;top:550px" width="8" height="8" viewBox="0 0 8 8" ><circle cx="4" cy="4" r="3.200" fill="#a1a1a1" stroke="#1a1a1a" stroke-width="0.800"/></svg><div class="abs" style="left:163.5px;top:546px;width:134.5px;height:16px;background:#545454;border-radius:0 4px 4px 0;"></div><div class="t" style="left:180.5px;width:100px;top:548px;color:#e6e6e6;text-align:center">0.000</div><svg style="left:305.5px;top:552px" width="4" height="4" viewBox="0 0 4 4" ><circle cx="2" cy="2" r="1.600" fill="#d8d8d8"/></svg><div class="t" style="right:192.5px;top:570px;color:#dcdcdc;text-align:right">Поворот анизотро...</div><div class="abs" style="left:147px;top:568px;width:16.5px;height:16px;background:#2a2a2a;border-radius:4px 0 0 4px;"></div><svg style="left:151px;top:572px" width="8" height="8" viewBox="0 0 8 8" ><circle cx="4" cy="4" r="3.200" fill="#a1a1a1" stroke="#1a1a1a" stroke-width="0.800"/></svg><div class="abs" style="left:163.5px;top:568px;width:134.5px;height:16px;background:#545454;border-radius:0 4px 4px 0;"></div><div class="t" style="left:180.5px;width:100px;top:570px;color:#e6e6e6;text-align:center">0.000</div><svg style="left:305.5px;top:574px" width="4" height="4" viewBox="0 0 4 4" ><circle cx="2" cy="2" r="1.600" fill="#d8d8d8"/></svg><div class="t" style="right:192.5px;top:592px;color:#dcdcdc;text-align:right">Блеск ткани</div><div class="abs" style="left:147px;top:590px;width:16.5px;height:16px;background:#2a2a2a;border-radius:4px 0 0 4px;"></div><svg style="left:151px;top:594px" width="8" height="8" viewBox="0 0 8 8" ><circle cx="4" cy="4" r="3.200" fill="#a1a1a1" stroke="#1a1a1a" stroke-width="0.800"/></svg><div class="abs" style="left:163.5px;top:590px;width:134.5px;height:16px;background:#545454;border-radius:0 4px 4px 0;"></div><div class="t" style="left:180.5px;width:100px;top:592px;color:#e6e6e6;text-align:center">0.000</div><svg style="left:305.5px;top:596px" width="4" height="4" viewBox="0 0 4 4" ><circle cx="2" cy="2" r="1.600" fill="#d8d8d8"/></svg><div class="t" style="right:192.5px;top:614px;color:#dcdcdc;text-align:right">Оттенок блеска тк...</div><div class="abs" style="left:147px;top:612px;width:16.5px;height:16px;background:#2a2a2a;border-radius:4px 0 0 4px;"></div><svg style="left:151px;top:616px" width="8" height="8" viewBox="0 0 8 8" ><circle cx="4" cy="4" r="3.200" fill="#a1a1a1" stroke="#1a1a1a" stroke-width="0.800"/></svg><div class="abs" style="left:163.5px;top:612px;width:134.5px;height:16px;background:linear-gradient(90deg,#4772b3 0,#4772b3 50.0%,#545454 50.0%);border-radius:0 4px 4px 0;"></div><div class="t" style="left:180.5px;width:100px;top:614px;color:#e6e6e6;text-align:center">0.500</div><svg style="left:305.5px;top:618px" width="4" height="4" viewBox="0 0 4 4" ><circle cx="2" cy="2" r="1.600" fill="#d8d8d8"/></svg><div class="t" style="right:192.5px;top:636px;color:#dcdcdc;text-align:right">Лак</div><div class="abs" style="left:147px;top:634px;width:16.5px;height:16px;background:#2a2a2a;border-radius:4px 0 0 4px;"></div><svg style="left:151px;top:638px" width="8" height="8" viewBox="0 0 8 8" ><circle cx="4" cy="4" r="3.200" fill="#a1a1a1" stroke="#1a1a1a" stroke-width="0.800"/></svg><div class="abs" style="left:163.5px;top:634px;width:134.5px;height:16px;background:#545454;border-radius:0 4px 4px 0;"></div><div class="t" style="left:180.5px;width:100px;top:636px;color:#e6e6e6;text-align:center">0.000</div><svg style="left:305.5px;top:640px" width="4" height="4" viewBox="0 0 4 4" ><circle cx="2" cy="2" r="1.600" fill="#d8d8d8"/></svg><div class="t" style="right:192.5px;top:658px;color:#dcdcdc;text-align:right">Шероховатость лака</div><div class="abs" style="left:147px;top:656px;width:16.5px;height:16px;background:#2a2a2a;border-radius:4px 0 0 4px;"></div><svg style="left:151px;top:660px" width="8" height="8" viewBox="0 0 8 8" ><circle cx="4" cy="4" r="3.200" fill="#a1a1a1" stroke="#1a1a1a" stroke-width="0.800"/></svg><div class="abs" style="left:163.5px;top:656px;width:134.5px;height:16px;background:linear-gradient(90deg,#4772b3 0,#4772b3 3.0%,#545454 3.0%);border-radius:0 4px 4px 0;"></div><div class="t" style="left:180.5px;width:100px;top:658px;color:#e6e6e6;text-align:center">0.030</div><svg style="left:305.5px;top:662px" width="4" height="4" viewBox="0 0 4 4" ><circle cx="2" cy="2" r="1.600" fill="#d8d8d8"/></svg><svg style="left:5.5px;top:35.0px" width="14" height="14" viewBox="0 0 16 16" ><path d="M4 1.500 V7 M4 7 C2.500 7 2.200 8.500 2.200 10.500 C2.200 13 2.800 14.500 4 14.500 C5.200 14.500 5.800 13 5.800 10.500 C5.800 8.500 5.500 7 4 7 Z" fill="#dcdcdc" stroke="#dcdcdc" stroke-width="1.200"/><path d="M9 2 V5 L10.200 6.500 V13.500 A1.300 1.300 0 0 0 12.800 13.500 V6.500 L14 5 V2 M11.500 2.500 V5" fill="none" stroke="#dcdcdc" stroke-width="1.400" stroke-linejoin="round"/></svg><svg style="left:5.5px;top:67.0px" width="14" height="14" viewBox="0 0 16 16" ><rect x="1.500" y="5" width="11.500" height="8.500" rx="1" fill="none" stroke="#dcdcdc" stroke-width="1.500"/><path d="M4.500 5 V3 H9 V5" fill="none" stroke="#dcdcdc" stroke-width="1.300"/><path d="M13 7 H15 M13 9.300 H15 M13 11.600 H15" stroke="#dcdcdc" stroke-width="1.100"/></svg><svg style="left:5.5px;top:93.0px" width="14" height="14" viewBox="0 0 16 16" ><path d="M1.500 2 H14.500 V6 H1.500 Z" fill="#dcdcdc"/><path d="M4 6 V14.500 H12 V6" fill="none" stroke="#dcdcdc" stroke-width="1.400"/><path d="M5.500 13 L8 9 L9.500 11 L10.500 10 V13 Z" fill="#dcdcdc"/></svg><svg style="left:5.5px;top:117.0px" width="14" height="14" viewBox="0 0 16 16" ><path d="M1.500 5 V14.500 H11" fill="none" stroke="#dcdcdc" stroke-width="1.100"/><path d="M3.500 3.500 V12.500 H13" fill="none" stroke="#dcdcdc" stroke-width="1.100"/><rect x="5.500" y="1.500" width="9.500" height="9" fill="none" stroke="#dcdcdc" stroke-width="1.300"/><path d="M6.500 9.500 L9.200 6 L11 8 L12 7 L14 9.500 Z" fill="#dcdcdc"/></svg><svg style="left:5.5px;top:141.5px" width="14" height="14" viewBox="0 0 16 16" ><path d="M5 1.500 L8.200 10 a3.200 1.600 0 0 1 -6.400 0 Z" fill="#dcdcdc"/><circle cx="10.300" cy="11.200" r="3" fill="none" stroke="#dcdcdc" stroke-width="1.400"/><circle cx="12.200" cy="4.600" r="1.900" fill="#dcdcdc"/></svg><svg style="left:5.5px;top:167.0px" width="14" height="14" viewBox="0 0 16 16" ><circle cx="8" cy="8" r="5.500" fill="#7a2a35" stroke="#d0525f" stroke-width="1.300"/><path d="M5 5 C7 4 8 6 7 7.500 C6 9 8 10 8.500 12 M10 4 C9.500 6 11.500 6.500 12 8" fill="none" stroke="#d0525f" stroke-width="1.200"/><path d="M2 13 L4 11.500 M14 3 L12 4.500" stroke="#d0525f" stroke-width="1.100"/></svg><svg style="left:5.5px;top:200.5px" width="14" height="14" viewBox="0 0 16 16" ><rect x="1.500" y="2" width="13" height="3.500" fill="none" stroke="#dcdcdc" stroke-width="1.300"/><path d="M2.500 5.500 V14 H13.500 V5.500" fill="none" stroke="#dcdcdc" stroke-width="1.300"/><rect x="6" y="7.500" width="4" height="1.800" fill="#dcdcdc"/></svg><svg style="left:5.5px;top:232.0px" width="14" height="14" viewBox="0 0 16 16" ><path d="M1.500 5 V1.500 H5 M11 1.500 H14.500 V5 M14.500 11 V14.500 H11 M5 14.500 H1.500 V11" fill="none" stroke="#a85f2a" stroke-width="1.300"/><rect x="3.800" y="3.800" width="8.400" height="8.400" fill="#e39a5c"/></svg><svg style="left:5.5px;top:257.0px" width="14" height="14" viewBox="0 0 16 16" ><path d="M10.500 1.500 A4 4 0 0 0 7.200 7 L1.800 12.400 A1.400 1.400 0 0 0 3.800 14.400 L9.200 9 A4 4 0 0 0 14.500 5.500 L12 8 L9.500 7.500 L8.800 5 L11.500 2.300 Z" fill="#5b93d6"/></svg><svg style="left:5.5px;top:281.5px" width="14" height="14" viewBox="0 0 16 16" ><circle cx="3.500" cy="3.500" r="1.700" fill="#5b93d6"/><path d="M4.500 4.500 L12 7 M4.500 4.500 L7 13 M7 8.500 L13.500 13.500" stroke="#5b93d6" stroke-width="1.100" fill="none"/><circle cx="12.500" cy="7" r="1.200" fill="#5b93d6"/><circle cx="7" cy="13.500" r="1.200" fill="#5b93d6"/><circle cx="13.500" cy="13.500" r="1" fill="#5b93d6"/></svg><svg style="left:5.5px;top:307.0px" width="14" height="14" viewBox="0 0 16 16" ><circle cx="8" cy="8.500" r="5.200" fill="none" stroke="#5b93d6" stroke-width="1.500"/><circle cx="8" cy="8.500" r="2" fill="#5b93d6"/><circle cx="12.500" cy="3.500" r="1.500" fill="#5b93d6"/></svg><svg style="left:5.5px;top:331.5px" width="14" height="14" viewBox="0 0 16 16" ><ellipse cx="8" cy="8" rx="6.500" ry="3.600" transform="rotate(-35 8 8)" fill="none" stroke="#5b93d6" stroke-width="1.500"/><circle cx="8" cy="8" r="1.800" fill="#5b93d6"/><circle cx="13" cy="3.500" r="1.400" fill="#5b93d6"/></svg><svg style="left:5.5px;top:356.5px" width="14" height="14" viewBox="0 0 16 16" ><path d="M2.500 3 H13.500 L8 13 Z" fill="none" stroke="#3fc07e" stroke-width="1.300"/><circle cx="2.500" cy="3" r="1.700" fill="#1e1e1e" stroke="#3fc07e" stroke-width="1.100"/><circle cx="13.500" cy="3" r="1.700" fill="#1e1e1e" stroke="#3fc07e" stroke-width="1.100"/><circle cx="8" cy="13.200" r="1.700" fill="#1e1e1e" stroke="#3fc07e" stroke-width="1.100"/></svg><svg style="left:5.5px;top:382.0px" width="14" height="14" viewBox="0 0 16 16" ><circle cx="8" cy="8" r="6.300" fill="#e4566a"/><path d="M8 8 V1.700 A6.300 6.300 0 0 1 14.300 8 Z" fill="#6b2530"/><path d="M8 8 V14.300 A6.300 6.300 0 0 1 1.700 8 Z" fill="#6b2530"/><circle cx="8" cy="8" r="6.300" fill="none" stroke="#e4566a" stroke-width="1.200"/></svg><svg style="left:5.5px;top:414.0px" width="14" height="14" viewBox="0 0 16 16" ><rect x="2" y="2" width="3" height="3" fill="#e4566a"/><rect x="2" y="5" width="3" height="3" fill="#6b2530"/><rect x="2" y="8" width="3" height="3" fill="#e4566a"/><rect x="2" y="11" width="3" height="3" fill="#6b2530"/><rect x="5" y="2" width="3" height="3" fill="#6b2530"/><rect x="5" y="5" width="3" height="3" fill="#e4566a"/><rect x="5" y="8" width="3" height="3" fill="#6b2530"/><rect x="5" y="11" width="3" height="3" fill="#e4566a"/><rect x="8" y="2" width="3" height="3" fill="#e4566a"/><rect x="8" y="5" width="3" height="3" fill="#6b2530"/><rect x="8" y="8" width="3" height="3" fill="#e4566a"/><rect x="8" y="11" width="3" height="3" fill="#6b2530"/><rect x="11" y="2" width="3" height="3" fill="#6b2530"/><rect x="11" y="5" width="3" height="3" fill="#e4566a"/><rect x="11" y="8" width="3" height="3" fill="#6b2530"/><rect x="11" y="11" width="3" height="3" fill="#e4566a"/></svg></div>
<div id="status"><svg style="left:10px;top:2px" width="9" height="12" viewBox="0 0 9 12" ><rect x="0.600" y="0.600" width="7.800" height="10.800" rx="2.500" fill="none" stroke="#9a9a9a" stroke-width="1"/><path d="M0.600 5 V3 Q0.600 0.600 3 0.600 H4.500 V5 Z" fill="#d0d0d0"/></svg><div class="t" style="left:31px;top:2px;color:#a0a0a0;">Выделить</div><svg style="left:220px;top:2px" width="9" height="12" viewBox="0 0 9 12" ><rect x="0.600" y="0.600" width="7.800" height="10.800" rx="2.500" fill="none" stroke="#9a9a9a" stroke-width="1"/><rect x="3.300" y="1.500" width="2.400" height="4" rx="1" fill="#d0d0d0"/></svg><div class="t" style="left:240px;top:2px;color:#a0a0a0;">Повернуть вид</div><svg style="left:429px;top:2px" width="9" height="12" viewBox="0 0 9 12" ><rect x="0.600" y="0.600" width="7.800" height="10.800" rx="2.500" fill="none" stroke="#9a9a9a" stroke-width="1"/><path d="M8.400 5 V3 Q8.400 0.600 6 0.600 H4.500 V5 Z" fill="#d0d0d0"/></svg><div class="t" style="left:450px;top:2px;color:#a0a0a0;">Контекстное меню объектов</div><div class="abs" style="left:834px;top:0;width:233px;height:16px;background:#1d232e;border-radius:3px"></div><div class="abs" style="left:835px;top:1px;width:17px;height:15px;background:#2f2f2f;border-radius:3px"></div><svg style="left:839px;top:2px" width="9" height="12" viewBox="0 0 9 12" ><rect x="0" y="0" width="9" height="10" rx="1.500" fill="#f2f2f2"/><path d="M2 10 L2 12 L4.500 10 Z" fill="#f2f2f2"/><rect x="3.700" y="4" width="1.700" height="4" fill="#222"/><rect x="3.700" y="1.700" width="1.700" height="1.500" fill="#222"/></svg><div class="t" style="left:865px;top:2px;color:#ffffff;">«Red Circle With Slash.blend» сохранено</div><div class="t" style="left:1888px;top:2px;color:#8c8c8c;">3.6.0</div></div>
</div>
</body></html>
